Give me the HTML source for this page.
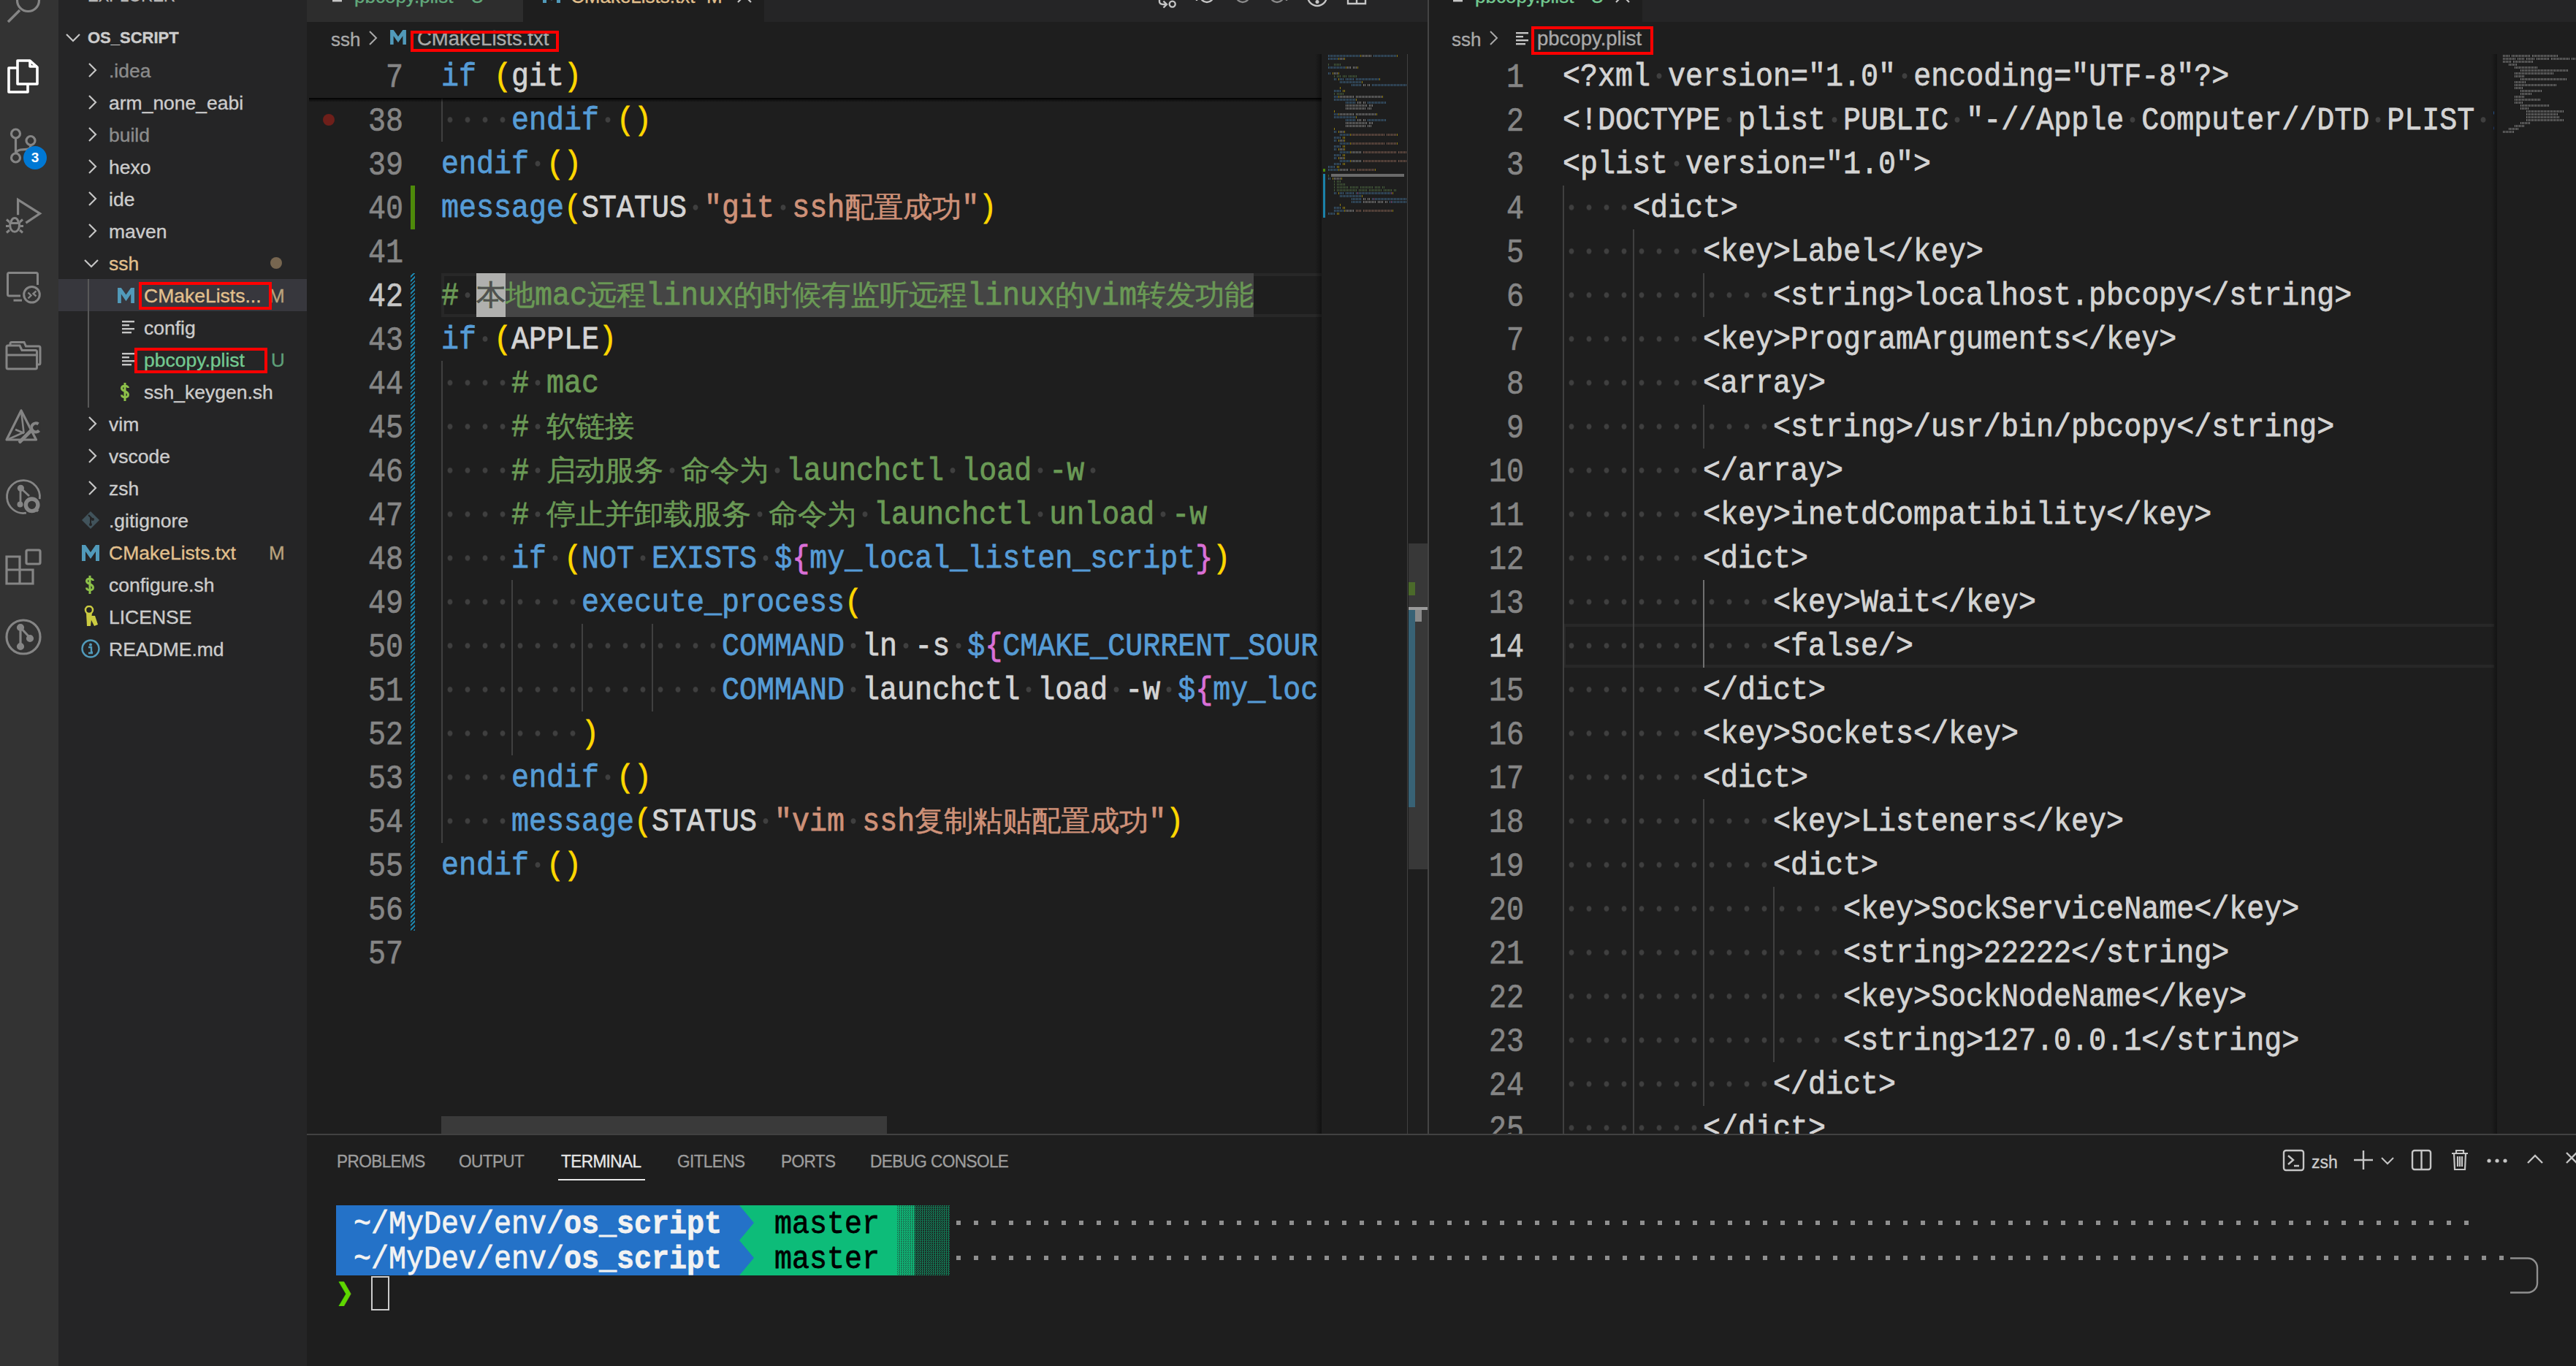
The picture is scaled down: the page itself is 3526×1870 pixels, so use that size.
<!DOCTYPE html><html><head><meta charset="utf-8"><style>
*{margin:0;padding:0;box-sizing:border-box}
html,body{width:3526px;height:1870px;overflow:hidden;background:#1e1e1e}
body{position:relative;font-family:"Liberation Sans",sans-serif}
.a{position:absolute}
.mono{font-family:"Liberation Mono",monospace;font-size:40px;white-space:pre;line-height:60px;transform:scaleY(1.10);transform-origin:0 6px;-webkit-text-stroke:0.7px currentColor}
.term{transform:scaleY(1.12);transform-origin:0 0}
.ws{display:inline-block;vertical-align:top;height:60px;background:radial-gradient(circle at 12px 27.8px,#3f3f3f 0,#3f3f3f 2.9px,rgba(0,0,0,0) 3.9px) 0 0/24px 60px repeat-x}
.cjk{display:inline-block;vertical-align:top;height:60px;transform:scaleY(0.88);transform-origin:50% 37.3px;-webkit-text-stroke:0.5px currentColor}
.ui{font-family:"Liberation Sans",sans-serif;font-size:26px;white-space:pre;-webkit-text-stroke:0.35px currentColor}
.ln{font-family:"Liberation Mono",monospace;font-size:40px;line-height:60px;color:#858585;text-align:right;width:132px;transform:scaleY(1.15);transform-origin:0 6px;-webkit-text-stroke:0.6px currentColor}
.guide{position:absolute;width:2px;background:#404040}
</style></head><body>
<div class="a" style="left:0;top:0;width:80px;height:1870px;background:#333333"></div>
<svg class="a" style="left:0;top:0" width="80" height="920" viewBox="0 0 80 920" fill="none" stroke="#858585" stroke-width="3.2">
<!-- search -->
<circle cx="38.5" cy="0.5" r="15"/><line x1="27" y1="14" x2="11" y2="30" stroke-width="3.6"/>
<!-- explorer -->
<g stroke="#ffffff" stroke-width="3.6" stroke-linejoin="round">
<path d="M24 83 H41 L51 92 V115 H24 Z"/><path d="M41 83 V91 H51"/>
<path d="M24 93 H12 V126 H38 V115"/>
</g>
<!-- scm -->
<circle cx="21.5" cy="183" r="6"/><circle cx="42" cy="192.5" r="6"/><circle cx="21.5" cy="216" r="6"/>
<path d="M21.5 189 V210 M42 198.5 C42 206 36 204 28 205 C24 206 22 208 22 210"/>
<!-- debug -->
<path d="M24.6 294.3 V273.5 L54.6 292.3 L35.4 305.1" stroke-width="3.2"/>
<path d="M13.8 305.5 V309 A6.3 8.3 0 0 0 26.4 309 V305.5 Z" stroke-width="3"/>
<path d="M15.2 304.5 A4.9 6 0 0 1 25 304.5" stroke-width="3"/>
<path d="M9 300.5 L13 304 M31 300.5 L27 304 M8 309.5 H12.5 M27.5 309.5 H32 M9 318.5 L13 315 M31 318.5 L27 315" stroke-width="3"/>
<!-- remote -->
<path d="M28 405 H12.5 A2 2 0 0 1 10.5 403 V375.5 A2 2 0 0 1 12.5 373.5 H49.5 A2 2 0 0 1 51.5 375.5 V390" stroke-width="3"/><path d="M18.5 411.2 H30" stroke-width="3"/>
<circle cx="43.5" cy="403.3" r="10.8" stroke-width="3"/><path d="M38.5 400.5 L42.5 404.5 L38.5 408.5 M49.5 398.5 L45.5 402 L49.5 405.5" stroke-width="2.4"/>
<!-- folder -->
<path d="M11 473 H27 L30 479.5 H48.5 A2 2 0 0 1 50.5 481.5 V503 A2 2 0 0 1 48.5 505 H11 A2 2 0 0 1 9 503 V475 A2 2 0 0 1 11 473 Z" stroke-width="3"/><path d="M9 486 H50.5" stroke-width="3"/>
<path d="M14 472 V470.5 A2 2 0 0 1 16 468.5 H33 L35.5 474 H53 A2 2 0 0 1 55 476 V497 A2 2 0 0 1 53 499 H51" stroke-width="3"/>
<!-- cmake/triangle wrench -->
<path d="M29 562 L9 602 H49.5 Z" stroke-width="3.2" stroke-linejoin="round"/>
<path d="M29 562 L32.5 592 L12 601 M21 588 L33 593" stroke-width="2.6"/>
<circle cx="48.5" cy="585" r="7.5" fill="#333333" stroke="none"/>
<path d="M27.5 604.5 L42.5 589.5" stroke-width="5" stroke-linecap="round"/>
<path d="M52.5 580.5 A6 6 0 1 0 53.5 589.5" stroke-width="4.2"/>
<!-- gitlens -->
<path d="M54.3 683.1 A22.5 22.5 0 1 0 35.9 702.2" stroke-width="2.8"/>
<circle cx="28.4" cy="668.3" r="4.6" fill="#858585" stroke="none"/><circle cx="27.5" cy="690.5" r="4" fill="#858585" stroke="none"/>
<path d="M28 668 V690 M28.4 668.3 L40 679" stroke-width="2.8"/>
<circle cx="43.6" cy="691.3" r="11.5" fill="#333333" stroke="none"/>
<circle cx="43.6" cy="691.3" r="8.3" stroke-width="5.4"/><path d="M49 697 L52 700" stroke-width="3.5"/>
<!-- extensions -->
<path d="M9 762 H27 V780 H45 V799 H9 Z M27 780 V799 M9 780 H27"/><rect x="36" y="753" width="19" height="19" rx="2"/>
<!-- git graph -->
<circle cx="32" cy="872" r="23"/><circle cx="28" cy="859" r="3.5" fill="#858585"/><circle cx="41" cy="874" r="3.5" fill="#858585"/><circle cx="28" cy="885" r="3.5" fill="#858585"/><path d="M28 862 V882 M28 859 L40 872"/>
</svg>
<div class="a" style="left:32px;top:200px;width:32px;height:32px;border-radius:16px;background:#0078d4;color:#fff;font:bold 19px/32px 'Liberation Sans',sans-serif;text-align:center">3</div>
<div class="a" style="left:80px;top:0;width:340px;height:1870px;background:#252526"></div>
<div class="a ui" style="left:120px;top:-18px;font-size:22px;color:#bbbbbb;line-height:26px">EXPLORER</div>
<svg class="a" style="left:88px;top:44px" width="24" height="16"><path d="M3 3 L12 12 L21 3" stroke="#c5c5c5" stroke-width="2.2" fill="none"/></svg>
<div class="a ui" style="left:120px;top:30px;line-height:44px;font-size:22px;font-weight:bold;color:#cccccc">OS_SCRIPT</div>
<svg class="a" style="left:120px;top:85px" width="14" height="22"><path d="M2 2 L11 11 L2 20" stroke="#c5c5c5" stroke-width="2.2" fill="none"/></svg>
<div class="a ui" style="left:149px;top:75px;line-height:44px;font-size:26.5px;color:#8c8c8c">.idea</div>
<svg class="a" style="left:120px;top:129px" width="14" height="22"><path d="M2 2 L11 11 L2 20" stroke="#c5c5c5" stroke-width="2.2" fill="none"/></svg>
<div class="a ui" style="left:149px;top:119px;line-height:44px;font-size:26.5px;color:#cccccc">arm_none_eabi</div>
<svg class="a" style="left:120px;top:173px" width="14" height="22"><path d="M2 2 L11 11 L2 20" stroke="#c5c5c5" stroke-width="2.2" fill="none"/></svg>
<div class="a ui" style="left:149px;top:163px;line-height:44px;font-size:26.5px;color:#8c8c8c">build</div>
<svg class="a" style="left:120px;top:217px" width="14" height="22"><path d="M2 2 L11 11 L2 20" stroke="#c5c5c5" stroke-width="2.2" fill="none"/></svg>
<div class="a ui" style="left:149px;top:207px;line-height:44px;font-size:26.5px;color:#cccccc">hexo</div>
<svg class="a" style="left:120px;top:261px" width="14" height="22"><path d="M2 2 L11 11 L2 20" stroke="#c5c5c5" stroke-width="2.2" fill="none"/></svg>
<div class="a ui" style="left:149px;top:251px;line-height:44px;font-size:26.5px;color:#cccccc">ide</div>
<svg class="a" style="left:120px;top:305px" width="14" height="22"><path d="M2 2 L11 11 L2 20" stroke="#c5c5c5" stroke-width="2.2" fill="none"/></svg>
<div class="a ui" style="left:149px;top:295px;line-height:44px;font-size:26.5px;color:#cccccc">maven</div>
<svg class="a" style="left:114px;top:354px" width="24" height="14"><path d="M2 2 L11 11 L20 2" stroke="#c5c5c5" stroke-width="2.2" fill="none"/></svg>
<div class="a ui" style="left:149px;top:339px;line-height:44px;font-size:26.5px;color:#e2c08d">ssh</div>
<div class="a" style="left:80px;top:382px;width:340px;height:44px;background:#37373d"></div>
<svg class="a" style="left:161px;top:394px" width="23" height="21" viewBox="0 0 24 22"><path d="M0 22 V0 H5 L12 10 L19 0 H24 V22 H19 V9 L12 19 L5 9 V22 Z" fill="#519aba"/></svg>
<div class="a ui" style="left:197px;top:383px;line-height:44px;font-size:26.5px;color:#e2c08d">CMakeLists...</div>
<svg class="a" style="left:167px;top:438px" width="18" height="20"><g fill="#c5c5c5"><rect x="0" y="1" width="17" height="2.4"/><rect x="0" y="6" width="10" height="2.4"/><rect x="0" y="11" width="17" height="2.4"/><rect x="0" y="16" width="13" height="2.4"/></g></svg>
<div class="a ui" style="left:197px;top:427px;line-height:44px;font-size:26.5px;color:#cccccc">config</div>
<svg class="a" style="left:167px;top:482px" width="18" height="20"><g fill="#c5c5c5"><rect x="0" y="1" width="17" height="2.4"/><rect x="0" y="6" width="10" height="2.4"/><rect x="0" y="11" width="17" height="2.4"/><rect x="0" y="16" width="13" height="2.4"/></g></svg>
<div class="a ui" style="left:197px;top:471px;line-height:44px;font-size:26.5px;color:#73c991">pbcopy.plist</div>
<svg class="a" style="left:164px;top:524px" width="14" height="26"><path d="M7 0 V25 M11.5 7 C11.5 3.5 2.5 3.2 2.5 7.5 C2.5 12 11.5 11 11.5 16.5 C11.5 21 2.5 21 2.5 16.5" stroke="#8dc149" stroke-width="3" fill="none"/></svg>
<div class="a ui" style="left:197px;top:515px;line-height:44px;font-size:26.5px;color:#cccccc">ssh_keygen.sh</div>
<svg class="a" style="left:120px;top:569px" width="14" height="22"><path d="M2 2 L11 11 L2 20" stroke="#c5c5c5" stroke-width="2.2" fill="none"/></svg>
<div class="a ui" style="left:149px;top:559px;line-height:44px;font-size:26.5px;color:#cccccc">vim</div>
<svg class="a" style="left:120px;top:613px" width="14" height="22"><path d="M2 2 L11 11 L2 20" stroke="#c5c5c5" stroke-width="2.2" fill="none"/></svg>
<div class="a ui" style="left:149px;top:603px;line-height:44px;font-size:26.5px;color:#cccccc">vscode</div>
<svg class="a" style="left:120px;top:657px" width="14" height="22"><path d="M2 2 L11 11 L2 20" stroke="#c5c5c5" stroke-width="2.2" fill="none"/></svg>
<div class="a ui" style="left:149px;top:647px;line-height:44px;font-size:26.5px;color:#cccccc">zsh</div>
<svg class="a" style="left:110px;top:698px" width="28" height="28"><path d="M14 2 L26 14 L14 26 L2 14 Z" fill="#41535b"/><path d="M11 7 L17 13 M14 10 V20" stroke="#252526" stroke-width="2"/><circle cx="14" cy="20" r="2" fill="#252526"/><circle cx="17" cy="13" r="2" fill="#252526"/></svg>
<div class="a ui" style="left:149px;top:691px;line-height:44px;font-size:26.5px;color:#cccccc">.gitignore</div>
<svg class="a" style="left:112px;top:746px" width="24" height="22" viewBox="0 0 24 22"><path d="M0 22 V0 H5 L12 10 L19 0 H24 V22 H19 V9 L12 19 L5 9 V22 Z" fill="#519aba"/></svg>
<div class="a ui" style="left:149px;top:735px;line-height:44px;font-size:26.5px;color:#e2c08d">CMakeLists.txt</div>
<svg class="a" style="left:116px;top:788px" width="14" height="26"><path d="M7 0 V25 M11.5 7 C11.5 3.5 2.5 3.2 2.5 7.5 C2.5 12 11.5 11 11.5 16.5 C11.5 21 2.5 21 2.5 16.5" stroke="#8dc149" stroke-width="3" fill="none"/></svg>
<div class="a ui" style="left:149px;top:779px;line-height:44px;font-size:26.5px;color:#cccccc">configure.sh</div>
<svg class="a" style="left:110px;top:829px" width="28" height="30"><g fill="#cbcb41"><circle cx="12" cy="6" r="5" fill="none" stroke="#cbcb41" stroke-width="2.5"/><path d="M8 10 H16 L14 28 H9 Z"/><path d="M14 14 H20 L24 26 L19 28 L14 18 Z"/></g></svg>
<div class="a ui" style="left:149px;top:823px;line-height:44px;font-size:26.5px;color:#cccccc">LICENSE</div>
<svg class="a" style="left:110px;top:874px" width="28" height="28"><circle cx="14" cy="14" r="11.5" fill="none" stroke="#519aba" stroke-width="2.4"/><circle cx="14" cy="8.5" r="2" fill="#519aba"/><path d="M11 12 H15 V19 H17 M11 20 H17" stroke="#519aba" stroke-width="2.4" fill="none"/></svg>
<div class="a ui" style="left:149px;top:867px;line-height:44px;font-size:26.5px;color:#cccccc">README.md</div>
<div class="a" style="left:120px;top:382px;width:2px;height:176px;background:#585858"></div>
<div class="a" style="left:370px;top:352px;width:16px;height:16px;border-radius:8px;background:#776650"></div>
<div class="a ui" style="left:368px;top:383px;line-height:44px;color:#b9a27c">M</div>
<div class="a ui" style="left:371px;top:471px;line-height:44px;color:#5e9f78">U</div>
<div class="a ui" style="left:368px;top:735px;line-height:44px;color:#b9a27c">M</div>
<div class="a" style="left:190px;top:386px;width:182px;height:38px;border:4px solid #ff0000"></div>
<div class="a" style="left:184px;top:476px;width:182px;height:35px;border:4px solid #ff0000"></div>
<div class="a" style="left:420px;top:0;width:1534px;height:30px;background:#252526"></div>
<div class="a" style="left:420px;top:0;width:296px;height:30px;background:#2d2d2d"></div>
<svg class="a" style="left:455px;top:-16px" width="18" height="20"><g fill="#c5c5c5"><rect x="0" y="1" width="17" height="2.4"/><rect x="0" y="6" width="10" height="2.4"/><rect x="0" y="11" width="17" height="2.4"/><rect x="0" y="16" width="13" height="2.4"/></g></svg>
<div class="a ui" style="left:485px;top:-27px;line-height:44px;color:#62a97c">pbcopy.plist</div>
<div class="a ui" style="left:644px;top:-27px;line-height:44px;color:#62a97c">U</div>
<div class="a" style="left:716px;top:0;width:330px;height:30px;background:#1e1e1e"></div>
<svg class="a" style="left:743px;top:-18px" width="24" height="22" viewBox="0 0 24 22"><path d="M0 22 V0 H5 L12 10 L19 0 H24 V22 H19 V9 L12 19 L5 9 V22 Z" fill="#519aba"/></svg>
<div class="a ui" style="left:781px;top:-27px;line-height:44px;color:#e2c08d">CMakeLists.txt</div>
<div class="a ui" style="left:967px;top:-27px;line-height:44px;color:#e2c08d">M</div>
<svg class="a" style="left:1008px;top:-17px" width="22" height="22"><path d="M2 2 L20 20 M20 2 L2 20" stroke="#c5c5c5" stroke-width="2.2"/></svg>
<svg class="a" style="left:1580px;top:0" width="300" height="14" fill="none" stroke="#c5c5c5" stroke-width="2.4">
<path d="M7 -4 V2 C7 5 9 6 12 6 H17 M12.5 1.5 L17 6 L12.5 10.5"/><circle cx="24.7" cy="5.6" r="4"/>
<circle cx="72" cy="-6" r="9"/><path d="M58 -1 V1"/>
<circle cx="121" cy="-6" r="9" stroke="#8a8a8a"/>
<circle cx="168" cy="-6" r="9" stroke="#8a8a8a"/><path d="M181 -1 V1" stroke="#8a8a8a"/>
<circle cx="223" cy="-5" r="13"/><circle cx="223" cy="2.5" r="2.5" fill="#c5c5c5" stroke="none"/>
<path d="M265 -10 V5 H289 V-10 M277 -10 V5"/>
</svg>
<div class="a ui" style="left:453px;top:32px;line-height:44px;color:#a9a9a9">ssh</div>
<svg class="a" style="left:503px;top:41px" width="16" height="22"><path d="M3 2 L12 11 L3 20" stroke="#a9a9a9" stroke-width="2" fill="none"/></svg>
<svg class="a" style="left:534px;top:41px" width="22" height="20" viewBox="0 0 24 22"><path d="M0 22 V0 H5 L12 10 L19 0 H24 V22 H19 V9 L12 19 L5 9 V22 Z" fill="#519aba"/></svg>
<div class="a ui" style="left:571px;top:31px;line-height:44px;color:#a9a9a9;font-size:27.5px">CMakeLists.txt</div>
<div class="a" style="left:562px;top:42px;width:203px;height:29px;border:4px solid #ff0000"></div>
<div class="a" style="left:420px;top:74px;width:1386px;height:1478px;overflow:hidden">
<div class="a" style="left:184px;top:300px;width:1212px;height:60px;border:4px solid #282828"></div>
<div class="a" style="left:272px;top:300px;width:1024px;height:60px;background:#454545"></div>
<div class="a" style="left:232px;top:300px;width:40px;height:60px;background:#b0b0ae"></div>
<div class="guide" style="left:184px;top:60px;height:60px"></div>
<div class="guide" style="left:184px;top:420px;height:60px"></div>
<div class="guide" style="left:184px;top:480px;height:60px"></div>
<div class="guide" style="left:184px;top:540px;height:60px"></div>
<div class="guide" style="left:184px;top:600px;height:60px"></div>
<div class="guide" style="left:184px;top:660px;height:60px"></div>
<div class="guide" style="left:184px;top:720px;height:60px"></div>
<div class="guide" style="left:280px;top:720px;height:60px"></div>
<div class="guide" style="left:184px;top:780px;height:60px"></div>
<div class="guide" style="left:280px;top:780px;height:60px"></div>
<div class="guide" style="left:376px;top:780px;height:60px"></div>
<div class="guide" style="left:472px;top:780px;height:60px"></div>
<div class="guide" style="left:184px;top:840px;height:60px"></div>
<div class="guide" style="left:280px;top:840px;height:60px"></div>
<div class="guide" style="left:376px;top:840px;height:60px"></div>
<div class="guide" style="left:472px;top:840px;height:60px"></div>
<div class="guide" style="left:184px;top:900px;height:60px"></div>
<div class="guide" style="left:280px;top:900px;height:60px"></div>
<div class="guide" style="left:184px;top:960px;height:60px"></div>
<div class="guide" style="left:184px;top:1020px;height:60px"></div>
<div class="a mono" style="left:184px;top:60px"><span class="ws">    </span><span style="color:#569cd6">endif</span><span class="ws"> </span><span style="color:#ffd700">()</span></div>
<div class="a mono" style="left:184px;top:120px"><span style="color:#569cd6">endif</span><span class="ws"> </span><span style="color:#ffd700">()</span></div>
<div class="a mono" style="left:184px;top:180px"><span style="color:#569cd6">message</span><span style="color:#ffd700">(</span><span style="color:#d4d4d4">STATUS</span><span class="ws"> </span><span style="color:#ce9178">&quot;git</span><span class="ws"> </span><span style="color:#ce9178">ssh<span class="cjk">配置成功</span>&quot;</span><span style="color:#ffd700">)</span></div>
<div class="a mono" style="left:184px;top:240px"></div>
<div class="a mono" style="left:184px;top:300px"><span style="color:#6a9955">#</span><span class="ws"> </span><span style="color:#6a9955"><span class="cjk">本地</span>mac<span class="cjk">远程</span>linux<span class="cjk">的时候有监听远程</span>linux<span class="cjk">的</span>vim<span class="cjk">转发功能</span></span></div>
<div class="a mono" style="left:184px;top:360px"><span style="color:#569cd6">if</span><span class="ws"> </span><span style="color:#ffd700">(</span><span style="color:#d4d4d4">APPLE</span><span style="color:#ffd700">)</span></div>
<div class="a mono" style="left:184px;top:420px"><span class="ws">    </span><span style="color:#6a9955">#</span><span class="ws"> </span><span style="color:#6a9955">mac</span></div>
<div class="a mono" style="left:184px;top:480px"><span class="ws">    </span><span style="color:#6a9955">#</span><span class="ws"> </span><span style="color:#6a9955"><span class="cjk">软链接</span></span></div>
<div class="a mono" style="left:184px;top:540px"><span class="ws">    </span><span style="color:#6a9955">#</span><span class="ws"> </span><span style="color:#6a9955"><span class="cjk">启动服务</span></span><span class="ws"> </span><span style="color:#6a9955"><span class="cjk">命令为</span></span><span class="ws"> </span><span style="color:#6a9955">launchctl</span><span class="ws"> </span><span style="color:#6a9955">load</span><span class="ws"> </span><span style="color:#6a9955">-w</span><span class="ws"> </span></div>
<div class="a mono" style="left:184px;top:600px"><span class="ws">    </span><span style="color:#6a9955">#</span><span class="ws"> </span><span style="color:#6a9955"><span class="cjk">停止并卸载服务</span></span><span class="ws"> </span><span style="color:#6a9955"><span class="cjk">命令为</span></span><span class="ws"> </span><span style="color:#6a9955">launchctl</span><span class="ws"> </span><span style="color:#6a9955">unload</span><span class="ws"> </span><span style="color:#6a9955">-w</span></div>
<div class="a mono" style="left:184px;top:660px"><span class="ws">    </span><span style="color:#569cd6">if</span><span class="ws"> </span><span style="color:#ffd700">(</span><span style="color:#569cd6">NOT</span><span class="ws"> </span><span style="color:#569cd6">EXISTS</span><span class="ws"> </span><span style="color:#569cd6">$</span><span style="color:#da70d6">{</span><span style="color:#569cd6">my_local_listen_script</span><span style="color:#da70d6">}</span><span style="color:#ffd700">)</span></div>
<div class="a mono" style="left:184px;top:720px"><span class="ws">        </span><span style="color:#569cd6">execute_process</span><span style="color:#ffd700">(</span></div>
<div class="a mono" style="left:184px;top:780px"><span class="ws">                </span><span style="color:#569cd6">COMMAND</span><span class="ws"> </span><span style="color:#d4d4d4">ln</span><span class="ws"> </span><span style="color:#d4d4d4">-s</span><span class="ws"> </span><span style="color:#569cd6">$</span><span style="color:#da70d6">{</span><span style="color:#569cd6">CMAKE_CURRENT_SOURCE_DIR</span><span style="color:#da70d6">}</span></div>
<div class="a mono" style="left:184px;top:840px"><span class="ws">                </span><span style="color:#569cd6">COMMAND</span><span class="ws"> </span><span style="color:#d4d4d4">launchctl</span><span class="ws"> </span><span style="color:#d4d4d4">load</span><span class="ws"> </span><span style="color:#d4d4d4">-w</span><span class="ws"> </span><span style="color:#569cd6">$</span><span style="color:#da70d6">{</span><span style="color:#569cd6">my_local_listen_script</span><span style="color:#da70d6">}</span></div>
<div class="a mono" style="left:184px;top:900px"><span class="ws">        </span><span style="color:#ffd700">)</span></div>
<div class="a mono" style="left:184px;top:960px"><span class="ws">    </span><span style="color:#569cd6">endif</span><span class="ws"> </span><span style="color:#ffd700">()</span></div>
<div class="a mono" style="left:184px;top:1020px"><span class="ws">    </span><span style="color:#569cd6">message</span><span style="color:#ffd700">(</span><span style="color:#d4d4d4">STATUS</span><span class="ws"> </span><span style="color:#ce9178">&quot;vim</span><span class="ws"> </span><span style="color:#ce9178">ssh<span class="cjk">复制粘贴配置成功</span>&quot;</span><span style="color:#ffd700">)</span></div>
<div class="a mono" style="left:184px;top:1080px"><span style="color:#569cd6">endif</span><span class="ws"> </span><span style="color:#ffd700">()</span></div>
<div class="a mono" style="left:184px;top:1140px"></div>
<div class="a mono" style="left:184px;top:1200px"></div>
<div class="a mono" style="left:232px;top:300px;color:#505050"><span class="cjk">本</span></div>
<div class="a ln" style="left:0;top:60px;width:132px;color:#858585">38</div>
<div class="a ln" style="left:0;top:120px;width:132px;color:#858585">39</div>
<div class="a ln" style="left:0;top:180px;width:132px;color:#858585">40</div>
<div class="a ln" style="left:0;top:240px;width:132px;color:#858585">41</div>
<div class="a ln" style="left:0;top:300px;width:132px;color:#c6c6c6">42</div>
<div class="a ln" style="left:0;top:360px;width:132px;color:#858585">43</div>
<div class="a ln" style="left:0;top:420px;width:132px;color:#858585">44</div>
<div class="a ln" style="left:0;top:480px;width:132px;color:#858585">45</div>
<div class="a ln" style="left:0;top:540px;width:132px;color:#858585">46</div>
<div class="a ln" style="left:0;top:600px;width:132px;color:#858585">47</div>
<div class="a ln" style="left:0;top:660px;width:132px;color:#858585">48</div>
<div class="a ln" style="left:0;top:720px;width:132px;color:#858585">49</div>
<div class="a ln" style="left:0;top:780px;width:132px;color:#858585">50</div>
<div class="a ln" style="left:0;top:840px;width:132px;color:#858585">51</div>
<div class="a ln" style="left:0;top:900px;width:132px;color:#858585">52</div>
<div class="a ln" style="left:0;top:960px;width:132px;color:#858585">53</div>
<div class="a ln" style="left:0;top:1020px;width:132px;color:#858585">54</div>
<div class="a ln" style="left:0;top:1080px;width:132px;color:#858585">55</div>
<div class="a ln" style="left:0;top:1140px;width:132px;color:#858585">56</div>
<div class="a ln" style="left:0;top:1200px;width:132px;color:#858585">57</div>
<div class="a" style="left:22px;top:82px;width:16px;height:16px;border-radius:8px;background:#6e1f1a"></div>
<div class="a" style="left:142px;top:180px;width:6px;height:60px;background:#4e8a0a"></div>
<div class="a" style="left:142px;top:300px;width:6px;height:900px;background:repeating-linear-gradient(-45deg,#1b81a8 0,#1b81a8 2px,#1e1e1e 2px,#1e1e1e 4px)"></div>
<div class="a" style="left:0;top:0;width:1389px;height:60px;background:#1e1e1e"></div>
<div class="a" style="left:3px;top:60px;width:1389px;height:6px;background:linear-gradient(#000 0,rgba(0,0,0,0.6) 2px,rgba(0,0,0,0) 6px)"></div>
<div class="a ln" style="left:0;top:0">7</div>
<div class="a mono" style="left:184px;top:0"><span style="color:#569cd6">if</span> <span style="color:#ffd700">(</span><span style="color:#d4d4d4">git</span><span style="color:#ffd700">)</span></div>
</div>
<div class="a" style="left:1806px;top:134px;width:3px;height:6px;background:linear-gradient(#000 0,rgba(0,0,0,0.6) 2px,rgba(0,0,0,0) 6px)"></div>
<div class="a" style="left:1806px;top:374px;width:3px;height:4px;background:#282828"></div>
<div class="a" style="left:1806px;top:430px;width:3px;height:4px;background:#282828"></div>
<div class="a" style="left:604px;top:1528px;width:610px;height:24px;background:#3a3a3a"></div>
<div class="a" style="left:1800px;top:74px;width:9px;height:1478px;background:linear-gradient(90deg,rgba(0,0,0,0),rgba(0,0,0,0.4))"></div>
<div class="a" style="left:1809px;top:74px;width:117px;height:1478px;background:#1e1e1e"></div>
<div class="a" style="left:1818px;top:75px;width:108px;height:238px;overflow:hidden"><div class="a" style="left:0px;top:0px;width:44px;height:3px;background:repeating-linear-gradient(90deg,#569cd6 0,#569cd6 1.5px,rgba(0,0,0,0) 1.5px,rgba(0,0,0,0) 2px);opacity:0.50"></div><div class="a" style="left:44px;top:0px;width:2px;height:3px;background:repeating-linear-gradient(90deg,#ffd700 0,#ffd700 1.5px,rgba(0,0,0,0) 1.5px,rgba(0,0,0,0) 2px);opacity:0.50"></div><div class="a" style="left:46px;top:0px;width:14px;height:3px;background:repeating-linear-gradient(90deg,#d4d4d4 0,#d4d4d4 1.5px,rgba(0,0,0,0) 1.5px,rgba(0,0,0,0) 2px);opacity:0.50"></div><div class="a" style="left:62px;top:0px;width:32px;height:3px;background:repeating-linear-gradient(90deg,#569cd6 0,#569cd6 1.5px,rgba(0,0,0,0) 1.5px,rgba(0,0,0,0) 2px);opacity:0.50"></div><div class="a" style="left:94px;top:0px;width:2px;height:3px;background:repeating-linear-gradient(90deg,#ffd700 0,#ffd700 1.5px,rgba(0,0,0,0) 1.5px,rgba(0,0,0,0) 2px);opacity:0.50"></div><div class="a" style="left:0px;top:4px;width:14px;height:3px;background:repeating-linear-gradient(90deg,#569cd6 0,#569cd6 1.5px,rgba(0,0,0,0) 1.5px,rgba(0,0,0,0) 2px);opacity:0.50"></div><div class="a" style="left:14px;top:4px;width:2px;height:3px;background:repeating-linear-gradient(90deg,#ffd700 0,#ffd700 1.5px,rgba(0,0,0,0) 1.5px,rgba(0,0,0,0) 2px);opacity:0.50"></div><div class="a" style="left:16px;top:4px;width:6px;height:3px;background:repeating-linear-gradient(90deg,#d4d4d4 0,#d4d4d4 1.5px,rgba(0,0,0,0) 1.5px,rgba(0,0,0,0) 2px);opacity:0.50"></div><div class="a" style="left:22px;top:4px;width:2px;height:3px;background:repeating-linear-gradient(90deg,#ffd700 0,#ffd700 1.5px,rgba(0,0,0,0) 1.5px,rgba(0,0,0,0) 2px);opacity:0.50"></div><div class="a" style="left:0px;top:12px;width:2px;height:3px;background:repeating-linear-gradient(90deg,#6a9955 0,#6a9955 1.5px,rgba(0,0,0,0) 1.5px,rgba(0,0,0,0) 2px);opacity:0.50"></div><div class="a" style="left:8px;top:12px;width:10px;height:3px;background:repeating-linear-gradient(90deg,#6a9955 0,#6a9955 1.5px,rgba(0,0,0,0) 1.5px,rgba(0,0,0,0) 2px);opacity:0.50"></div><div class="a" style="left:0px;top:16px;width:24px;height:3px;background:repeating-linear-gradient(90deg,#569cd6 0,#569cd6 1.5px,rgba(0,0,0,0) 1.5px,rgba(0,0,0,0) 2px);opacity:0.50"></div><div class="a" style="left:24px;top:16px;width:2px;height:3px;background:repeating-linear-gradient(90deg,#ffd700 0,#ffd700 1.5px,rgba(0,0,0,0) 1.5px,rgba(0,0,0,0) 2px);opacity:0.50"></div><div class="a" style="left:26px;top:16px;width:6px;height:3px;background:repeating-linear-gradient(90deg,#d4d4d4 0,#d4d4d4 1.5px,rgba(0,0,0,0) 1.5px,rgba(0,0,0,0) 2px);opacity:0.50"></div><div class="a" style="left:34px;top:16px;width:6px;height:3px;background:repeating-linear-gradient(90deg,#d4d4d4 0,#d4d4d4 1.5px,rgba(0,0,0,0) 1.5px,rgba(0,0,0,0) 2px);opacity:0.50"></div><div class="a" style="left:40px;top:16px;width:2px;height:3px;background:repeating-linear-gradient(90deg,#ffd700 0,#ffd700 1.5px,rgba(0,0,0,0) 1.5px,rgba(0,0,0,0) 2px);opacity:0.50"></div><div class="a" style="left:0px;top:24px;width:4px;height:3px;background:repeating-linear-gradient(90deg,#569cd6 0,#569cd6 1.5px,rgba(0,0,0,0) 1.5px,rgba(0,0,0,0) 2px);opacity:0.50"></div><div class="a" style="left:6px;top:24px;width:2px;height:3px;background:repeating-linear-gradient(90deg,#ffd700 0,#ffd700 1.5px,rgba(0,0,0,0) 1.5px,rgba(0,0,0,0) 2px);opacity:0.50"></div><div class="a" style="left:8px;top:24px;width:6px;height:3px;background:repeating-linear-gradient(90deg,#d4d4d4 0,#d4d4d4 1.5px,rgba(0,0,0,0) 1.5px,rgba(0,0,0,0) 2px);opacity:0.50"></div><div class="a" style="left:14px;top:24px;width:2px;height:3px;background:repeating-linear-gradient(90deg,#ffd700 0,#ffd700 1.5px,rgba(0,0,0,0) 1.5px,rgba(0,0,0,0) 2px);opacity:0.50"></div><div class="a" style="left:8px;top:28px;width:2px;height:3px;background:repeating-linear-gradient(90deg,#6a9955 0,#6a9955 1.5px,rgba(0,0,0,0) 1.5px,rgba(0,0,0,0) 2px);opacity:0.50"></div><div class="a" style="left:12px;top:28px;width:6px;height:3px;background:repeating-linear-gradient(90deg,#6a9955 0,#6a9955 1.5px,rgba(0,0,0,0) 1.5px,rgba(0,0,0,0) 2px);opacity:0.50"></div><div class="a" style="left:20px;top:28px;width:6px;height:3px;background:repeating-linear-gradient(90deg,#6a9955 0,#6a9955 1.5px,rgba(0,0,0,0) 1.5px,rgba(0,0,0,0) 2px);opacity:0.50"></div><div class="a" style="left:28px;top:28px;width:12px;height:3px;background:repeating-linear-gradient(90deg,#6a9955 0,#6a9955 1.5px,rgba(0,0,0,0) 1.5px,rgba(0,0,0,0) 2px);opacity:0.50"></div><div class="a" style="left:8px;top:32px;width:4px;height:3px;background:repeating-linear-gradient(90deg,#569cd6 0,#569cd6 1.5px,rgba(0,0,0,0) 1.5px,rgba(0,0,0,0) 2px);opacity:0.50"></div><div class="a" style="left:14px;top:32px;width:2px;height:3px;background:repeating-linear-gradient(90deg,#ffd700 0,#ffd700 1.5px,rgba(0,0,0,0) 1.5px,rgba(0,0,0,0) 2px);opacity:0.50"></div><div class="a" style="left:16px;top:32px;width:6px;height:3px;background:repeating-linear-gradient(90deg,#569cd6 0,#569cd6 1.5px,rgba(0,0,0,0) 1.5px,rgba(0,0,0,0) 2px);opacity:0.50"></div><div class="a" style="left:24px;top:32px;width:12px;height:3px;background:repeating-linear-gradient(90deg,#569cd6 0,#569cd6 1.5px,rgba(0,0,0,0) 1.5px,rgba(0,0,0,0) 2px);opacity:0.50"></div><div class="a" style="left:38px;top:32px;width:32px;height:3px;background:repeating-linear-gradient(90deg,#569cd6 0,#569cd6 1.5px,rgba(0,0,0,0) 1.5px,rgba(0,0,0,0) 2px);opacity:0.50"></div><div class="a" style="left:70px;top:32px;width:2px;height:3px;background:repeating-linear-gradient(90deg,#ffd700 0,#ffd700 1.5px,rgba(0,0,0,0) 1.5px,rgba(0,0,0,0) 2px);opacity:0.50"></div><div class="a" style="left:16px;top:36px;width:30px;height:3px;background:repeating-linear-gradient(90deg,#569cd6 0,#569cd6 1.5px,rgba(0,0,0,0) 1.5px,rgba(0,0,0,0) 2px);opacity:0.50"></div><div class="a" style="left:46px;top:36px;width:2px;height:3px;background:repeating-linear-gradient(90deg,#ffd700 0,#ffd700 1.5px,rgba(0,0,0,0) 1.5px,rgba(0,0,0,0) 2px);opacity:0.50"></div><div class="a" style="left:32px;top:40px;width:14px;height:3px;background:repeating-linear-gradient(90deg,#569cd6 0,#569cd6 1.5px,rgba(0,0,0,0) 1.5px,rgba(0,0,0,0) 2px);opacity:0.50"></div><div class="a" style="left:48px;top:40px;width:4px;height:3px;background:repeating-linear-gradient(90deg,#d4d4d4 0,#d4d4d4 1.5px,rgba(0,0,0,0) 1.5px,rgba(0,0,0,0) 2px);opacity:0.50"></div><div class="a" style="left:54px;top:40px;width:4px;height:3px;background:repeating-linear-gradient(90deg,#d4d4d4 0,#d4d4d4 1.5px,rgba(0,0,0,0) 1.5px,rgba(0,0,0,0) 2px);opacity:0.50"></div><div class="a" style="left:60px;top:40px;width:54px;height:3px;background:repeating-linear-gradient(90deg,#569cd6 0,#569cd6 1.5px,rgba(0,0,0,0) 1.5px,rgba(0,0,0,0) 2px);opacity:0.50"></div><div class="a" style="left:16px;top:44px;width:2px;height:3px;background:repeating-linear-gradient(90deg,#ffd700 0,#ffd700 1.5px,rgba(0,0,0,0) 1.5px,rgba(0,0,0,0) 2px);opacity:0.50"></div><div class="a" style="left:8px;top:48px;width:10px;height:3px;background:repeating-linear-gradient(90deg,#569cd6 0,#569cd6 1.5px,rgba(0,0,0,0) 1.5px,rgba(0,0,0,0) 2px);opacity:0.50"></div><div class="a" style="left:20px;top:48px;width:4px;height:3px;background:repeating-linear-gradient(90deg,#ffd700 0,#ffd700 1.5px,rgba(0,0,0,0) 1.5px,rgba(0,0,0,0) 2px);opacity:0.50"></div><div class="a" style="left:8px;top:52px;width:2px;height:3px;background:repeating-linear-gradient(90deg,#6a9955 0,#6a9955 1.5px,rgba(0,0,0,0) 1.5px,rgba(0,0,0,0) 2px);opacity:0.50"></div><div class="a" style="left:12px;top:52px;width:10px;height:3px;background:repeating-linear-gradient(90deg,#6a9955 0,#6a9955 1.5px,rgba(0,0,0,0) 1.5px,rgba(0,0,0,0) 2px);opacity:0.50"></div><div class="a" style="left:8px;top:56px;width:6px;height:3px;background:repeating-linear-gradient(90deg,#569cd6 0,#569cd6 1.5px,rgba(0,0,0,0) 1.5px,rgba(0,0,0,0) 2px);opacity:0.50"></div><div class="a" style="left:14px;top:56px;width:2px;height:3px;background:repeating-linear-gradient(90deg,#ffd700 0,#ffd700 1.5px,rgba(0,0,0,0) 1.5px,rgba(0,0,0,0) 2px);opacity:0.50"></div><div class="a" style="left:16px;top:56px;width:20px;height:3px;background:repeating-linear-gradient(90deg,#d4d4d4 0,#d4d4d4 1.5px,rgba(0,0,0,0) 1.5px,rgba(0,0,0,0) 2px);opacity:0.50"></div><div class="a" style="left:38px;top:56px;width:36px;height:3px;background:repeating-linear-gradient(90deg,#d4d4d4 0,#d4d4d4 1.5px,rgba(0,0,0,0) 1.5px,rgba(0,0,0,0) 2px);opacity:0.50"></div><div class="a" style="left:74px;top:56px;width:2px;height:3px;background:repeating-linear-gradient(90deg,#ffd700 0,#ffd700 1.5px,rgba(0,0,0,0) 1.5px,rgba(0,0,0,0) 2px);opacity:0.50"></div><div class="a" style="left:8px;top:60px;width:30px;height:3px;background:repeating-linear-gradient(90deg,#569cd6 0,#569cd6 1.5px,rgba(0,0,0,0) 1.5px,rgba(0,0,0,0) 2px);opacity:0.50"></div><div class="a" style="left:38px;top:60px;width:2px;height:3px;background:repeating-linear-gradient(90deg,#ffd700 0,#ffd700 1.5px,rgba(0,0,0,0) 1.5px,rgba(0,0,0,0) 2px);opacity:0.50"></div><div class="a" style="left:24px;top:64px;width:14px;height:3px;background:repeating-linear-gradient(90deg,#569cd6 0,#569cd6 1.5px,rgba(0,0,0,0) 1.5px,rgba(0,0,0,0) 2px);opacity:0.50"></div><div class="a" style="left:40px;top:64px;width:6px;height:3px;background:repeating-linear-gradient(90deg,#d4d4d4 0,#d4d4d4 1.5px,rgba(0,0,0,0) 1.5px,rgba(0,0,0,0) 2px);opacity:0.50"></div><div class="a" style="left:48px;top:64px;width:4px;height:3px;background:repeating-linear-gradient(90deg,#d4d4d4 0,#d4d4d4 1.5px,rgba(0,0,0,0) 1.5px,rgba(0,0,0,0) 2px);opacity:0.50"></div><div class="a" style="left:54px;top:64px;width:26px;height:3px;background:repeating-linear-gradient(90deg,#569cd6 0,#569cd6 1.5px,rgba(0,0,0,0) 1.5px,rgba(0,0,0,0) 2px);opacity:0.50"></div><div class="a" style="left:24px;top:68px;width:30px;height:3px;background:repeating-linear-gradient(90deg,#d4d4d4 0,#d4d4d4 1.5px,rgba(0,0,0,0) 1.5px,rgba(0,0,0,0) 2px);opacity:0.50"></div><div class="a" style="left:56px;top:68px;width:6px;height:3px;background:repeating-linear-gradient(90deg,#d4d4d4 0,#d4d4d4 1.5px,rgba(0,0,0,0) 1.5px,rgba(0,0,0,0) 2px);opacity:0.50"></div><div class="a" style="left:24px;top:72px;width:28px;height:3px;background:repeating-linear-gradient(90deg,#d4d4d4 0,#d4d4d4 1.5px,rgba(0,0,0,0) 1.5px,rgba(0,0,0,0) 2px);opacity:0.50"></div><div class="a" style="left:54px;top:72px;width:6px;height:3px;background:repeating-linear-gradient(90deg,#d4d4d4 0,#d4d4d4 1.5px,rgba(0,0,0,0) 1.5px,rgba(0,0,0,0) 2px);opacity:0.50"></div><div class="a" style="left:8px;top:76px;width:2px;height:3px;background:repeating-linear-gradient(90deg,#ffd700 0,#ffd700 1.5px,rgba(0,0,0,0) 1.5px,rgba(0,0,0,0) 2px);opacity:0.50"></div><div class="a" style="left:8px;top:80px;width:6px;height:3px;background:repeating-linear-gradient(90deg,#569cd6 0,#569cd6 1.5px,rgba(0,0,0,0) 1.5px,rgba(0,0,0,0) 2px);opacity:0.50"></div><div class="a" style="left:14px;top:80px;width:2px;height:3px;background:repeating-linear-gradient(90deg,#ffd700 0,#ffd700 1.5px,rgba(0,0,0,0) 1.5px,rgba(0,0,0,0) 2px);opacity:0.50"></div><div class="a" style="left:16px;top:80px;width:20px;height:3px;background:repeating-linear-gradient(90deg,#d4d4d4 0,#d4d4d4 1.5px,rgba(0,0,0,0) 1.5px,rgba(0,0,0,0) 2px);opacity:0.50"></div><div class="a" style="left:38px;top:80px;width:28px;height:3px;background:repeating-linear-gradient(90deg,#d4d4d4 0,#d4d4d4 1.5px,rgba(0,0,0,0) 1.5px,rgba(0,0,0,0) 2px);opacity:0.50"></div><div class="a" style="left:66px;top:80px;width:2px;height:3px;background:repeating-linear-gradient(90deg,#ffd700 0,#ffd700 1.5px,rgba(0,0,0,0) 1.5px,rgba(0,0,0,0) 2px);opacity:0.50"></div><div class="a" style="left:8px;top:84px;width:30px;height:3px;background:repeating-linear-gradient(90deg,#569cd6 0,#569cd6 1.5px,rgba(0,0,0,0) 1.5px,rgba(0,0,0,0) 2px);opacity:0.50"></div><div class="a" style="left:38px;top:84px;width:2px;height:3px;background:repeating-linear-gradient(90deg,#ffd700 0,#ffd700 1.5px,rgba(0,0,0,0) 1.5px,rgba(0,0,0,0) 2px);opacity:0.50"></div><div class="a" style="left:24px;top:88px;width:14px;height:3px;background:repeating-linear-gradient(90deg,#569cd6 0,#569cd6 1.5px,rgba(0,0,0,0) 1.5px,rgba(0,0,0,0) 2px);opacity:0.50"></div><div class="a" style="left:40px;top:88px;width:6px;height:3px;background:repeating-linear-gradient(90deg,#d4d4d4 0,#d4d4d4 1.5px,rgba(0,0,0,0) 1.5px,rgba(0,0,0,0) 2px);opacity:0.50"></div><div class="a" style="left:48px;top:88px;width:4px;height:3px;background:repeating-linear-gradient(90deg,#d4d4d4 0,#d4d4d4 1.5px,rgba(0,0,0,0) 1.5px,rgba(0,0,0,0) 2px);opacity:0.50"></div><div class="a" style="left:54px;top:88px;width:26px;height:3px;background:repeating-linear-gradient(90deg,#569cd6 0,#569cd6 1.5px,rgba(0,0,0,0) 1.5px,rgba(0,0,0,0) 2px);opacity:0.50"></div><div class="a" style="left:24px;top:92px;width:30px;height:3px;background:repeating-linear-gradient(90deg,#d4d4d4 0,#d4d4d4 1.5px,rgba(0,0,0,0) 1.5px,rgba(0,0,0,0) 2px);opacity:0.50"></div><div class="a" style="left:56px;top:92px;width:6px;height:3px;background:repeating-linear-gradient(90deg,#d4d4d4 0,#d4d4d4 1.5px,rgba(0,0,0,0) 1.5px,rgba(0,0,0,0) 2px);opacity:0.50"></div><div class="a" style="left:24px;top:96px;width:28px;height:3px;background:repeating-linear-gradient(90deg,#d4d4d4 0,#d4d4d4 1.5px,rgba(0,0,0,0) 1.5px,rgba(0,0,0,0) 2px);opacity:0.50"></div><div class="a" style="left:54px;top:96px;width:6px;height:3px;background:repeating-linear-gradient(90deg,#d4d4d4 0,#d4d4d4 1.5px,rgba(0,0,0,0) 1.5px,rgba(0,0,0,0) 2px);opacity:0.50"></div><div class="a" style="left:8px;top:100px;width:2px;height:3px;background:repeating-linear-gradient(90deg,#ffd700 0,#ffd700 1.5px,rgba(0,0,0,0) 1.5px,rgba(0,0,0,0) 2px);opacity:0.50"></div><div class="a" style="left:8px;top:104px;width:4px;height:3px;background:repeating-linear-gradient(90deg,#569cd6 0,#569cd6 1.5px,rgba(0,0,0,0) 1.5px,rgba(0,0,0,0) 2px);opacity:0.50"></div><div class="a" style="left:14px;top:104px;width:2px;height:3px;background:repeating-linear-gradient(90deg,#ffd700 0,#ffd700 1.5px,rgba(0,0,0,0) 1.5px,rgba(0,0,0,0) 2px);opacity:0.50"></div><div class="a" style="left:16px;top:104px;width:6px;height:3px;background:repeating-linear-gradient(90deg,#d4d4d4 0,#d4d4d4 1.5px,rgba(0,0,0,0) 1.5px,rgba(0,0,0,0) 2px);opacity:0.50"></div><div class="a" style="left:22px;top:104px;width:2px;height:3px;background:repeating-linear-gradient(90deg,#ffd700 0,#ffd700 1.5px,rgba(0,0,0,0) 1.5px,rgba(0,0,0,0) 2px);opacity:0.50"></div><div class="a" style="left:16px;top:108px;width:14px;height:3px;background:repeating-linear-gradient(90deg,#569cd6 0,#569cd6 1.5px,rgba(0,0,0,0) 1.5px,rgba(0,0,0,0) 2px);opacity:0.50"></div><div class="a" style="left:30px;top:108px;width:2px;height:3px;background:repeating-linear-gradient(90deg,#ffd700 0,#ffd700 1.5px,rgba(0,0,0,0) 1.5px,rgba(0,0,0,0) 2px);opacity:0.50"></div><div class="a" style="left:32px;top:108px;width:46px;height:3px;background:repeating-linear-gradient(90deg,#ce9178 0,#ce9178 1.5px,rgba(0,0,0,0) 1.5px,rgba(0,0,0,0) 2px);opacity:0.50"></div><div class="a" style="left:80px;top:108px;width:14px;height:3px;background:repeating-linear-gradient(90deg,#ce9178 0,#ce9178 1.5px,rgba(0,0,0,0) 1.5px,rgba(0,0,0,0) 2px);opacity:0.50"></div><div class="a" style="left:94px;top:108px;width:2px;height:3px;background:repeating-linear-gradient(90deg,#ffd700 0,#ffd700 1.5px,rgba(0,0,0,0) 1.5px,rgba(0,0,0,0) 2px);opacity:0.50"></div><div class="a" style="left:8px;top:112px;width:10px;height:3px;background:repeating-linear-gradient(90deg,#569cd6 0,#569cd6 1.5px,rgba(0,0,0,0) 1.5px,rgba(0,0,0,0) 2px);opacity:0.50"></div><div class="a" style="left:20px;top:112px;width:4px;height:3px;background:repeating-linear-gradient(90deg,#ffd700 0,#ffd700 1.5px,rgba(0,0,0,0) 1.5px,rgba(0,0,0,0) 2px);opacity:0.50"></div><div class="a" style="left:8px;top:116px;width:4px;height:3px;background:repeating-linear-gradient(90deg,#569cd6 0,#569cd6 1.5px,rgba(0,0,0,0) 1.5px,rgba(0,0,0,0) 2px);opacity:0.50"></div><div class="a" style="left:14px;top:116px;width:2px;height:3px;background:repeating-linear-gradient(90deg,#ffd700 0,#ffd700 1.5px,rgba(0,0,0,0) 1.5px,rgba(0,0,0,0) 2px);opacity:0.50"></div><div class="a" style="left:16px;top:116px;width:6px;height:3px;background:repeating-linear-gradient(90deg,#d4d4d4 0,#d4d4d4 1.5px,rgba(0,0,0,0) 1.5px,rgba(0,0,0,0) 2px);opacity:0.50"></div><div class="a" style="left:22px;top:116px;width:2px;height:3px;background:repeating-linear-gradient(90deg,#ffd700 0,#ffd700 1.5px,rgba(0,0,0,0) 1.5px,rgba(0,0,0,0) 2px);opacity:0.50"></div><div class="a" style="left:16px;top:120px;width:14px;height:3px;background:repeating-linear-gradient(90deg,#569cd6 0,#569cd6 1.5px,rgba(0,0,0,0) 1.5px,rgba(0,0,0,0) 2px);opacity:0.50"></div><div class="a" style="left:30px;top:120px;width:2px;height:3px;background:repeating-linear-gradient(90deg,#ffd700 0,#ffd700 1.5px,rgba(0,0,0,0) 1.5px,rgba(0,0,0,0) 2px);opacity:0.50"></div><div class="a" style="left:32px;top:120px;width:46px;height:3px;background:repeating-linear-gradient(90deg,#ce9178 0,#ce9178 1.5px,rgba(0,0,0,0) 1.5px,rgba(0,0,0,0) 2px);opacity:0.50"></div><div class="a" style="left:80px;top:120px;width:14px;height:3px;background:repeating-linear-gradient(90deg,#ce9178 0,#ce9178 1.5px,rgba(0,0,0,0) 1.5px,rgba(0,0,0,0) 2px);opacity:0.50"></div><div class="a" style="left:94px;top:120px;width:2px;height:3px;background:repeating-linear-gradient(90deg,#ffd700 0,#ffd700 1.5px,rgba(0,0,0,0) 1.5px,rgba(0,0,0,0) 2px);opacity:0.50"></div><div class="a" style="left:8px;top:124px;width:10px;height:3px;background:repeating-linear-gradient(90deg,#569cd6 0,#569cd6 1.5px,rgba(0,0,0,0) 1.5px,rgba(0,0,0,0) 2px);opacity:0.50"></div><div class="a" style="left:20px;top:124px;width:4px;height:3px;background:repeating-linear-gradient(90deg,#ffd700 0,#ffd700 1.5px,rgba(0,0,0,0) 1.5px,rgba(0,0,0,0) 2px);opacity:0.50"></div><div class="a" style="left:8px;top:128px;width:4px;height:3px;background:repeating-linear-gradient(90deg,#569cd6 0,#569cd6 1.5px,rgba(0,0,0,0) 1.5px,rgba(0,0,0,0) 2px);opacity:0.50"></div><div class="a" style="left:14px;top:128px;width:2px;height:3px;background:repeating-linear-gradient(90deg,#ffd700 0,#ffd700 1.5px,rgba(0,0,0,0) 1.5px,rgba(0,0,0,0) 2px);opacity:0.50"></div><div class="a" style="left:16px;top:128px;width:6px;height:3px;background:repeating-linear-gradient(90deg,#d4d4d4 0,#d4d4d4 1.5px,rgba(0,0,0,0) 1.5px,rgba(0,0,0,0) 2px);opacity:0.50"></div><div class="a" style="left:22px;top:128px;width:2px;height:3px;background:repeating-linear-gradient(90deg,#ffd700 0,#ffd700 1.5px,rgba(0,0,0,0) 1.5px,rgba(0,0,0,0) 2px);opacity:0.50"></div><div class="a" style="left:16px;top:132px;width:14px;height:3px;background:repeating-linear-gradient(90deg,#569cd6 0,#569cd6 1.5px,rgba(0,0,0,0) 1.5px,rgba(0,0,0,0) 2px);opacity:0.50"></div><div class="a" style="left:30px;top:132px;width:2px;height:3px;background:repeating-linear-gradient(90deg,#ffd700 0,#ffd700 1.5px,rgba(0,0,0,0) 1.5px,rgba(0,0,0,0) 2px);opacity:0.50"></div><div class="a" style="left:32px;top:132px;width:14px;height:3px;background:repeating-linear-gradient(90deg,#d4d4d4 0,#d4d4d4 1.5px,rgba(0,0,0,0) 1.5px,rgba(0,0,0,0) 2px);opacity:0.50"></div><div class="a" style="left:48px;top:132px;width:46px;height:3px;background:repeating-linear-gradient(90deg,#ce9178 0,#ce9178 1.5px,rgba(0,0,0,0) 1.5px,rgba(0,0,0,0) 2px);opacity:0.50"></div><div class="a" style="left:96px;top:132px;width:14px;height:3px;background:repeating-linear-gradient(90deg,#ce9178 0,#ce9178 1.5px,rgba(0,0,0,0) 1.5px,rgba(0,0,0,0) 2px);opacity:0.50"></div><div class="a" style="left:110px;top:132px;width:2px;height:3px;background:repeating-linear-gradient(90deg,#ffd700 0,#ffd700 1.5px,rgba(0,0,0,0) 1.5px,rgba(0,0,0,0) 2px);opacity:0.50"></div><div class="a" style="left:8px;top:136px;width:10px;height:3px;background:repeating-linear-gradient(90deg,#569cd6 0,#569cd6 1.5px,rgba(0,0,0,0) 1.5px,rgba(0,0,0,0) 2px);opacity:0.50"></div><div class="a" style="left:20px;top:136px;width:4px;height:3px;background:repeating-linear-gradient(90deg,#ffd700 0,#ffd700 1.5px,rgba(0,0,0,0) 1.5px,rgba(0,0,0,0) 2px);opacity:0.50"></div><div class="a" style="left:8px;top:140px;width:4px;height:3px;background:repeating-linear-gradient(90deg,#569cd6 0,#569cd6 1.5px,rgba(0,0,0,0) 1.5px,rgba(0,0,0,0) 2px);opacity:0.50"></div><div class="a" style="left:14px;top:140px;width:2px;height:3px;background:repeating-linear-gradient(90deg,#ffd700 0,#ffd700 1.5px,rgba(0,0,0,0) 1.5px,rgba(0,0,0,0) 2px);opacity:0.50"></div><div class="a" style="left:16px;top:140px;width:6px;height:3px;background:repeating-linear-gradient(90deg,#d4d4d4 0,#d4d4d4 1.5px,rgba(0,0,0,0) 1.5px,rgba(0,0,0,0) 2px);opacity:0.50"></div><div class="a" style="left:22px;top:140px;width:2px;height:3px;background:repeating-linear-gradient(90deg,#ffd700 0,#ffd700 1.5px,rgba(0,0,0,0) 1.5px,rgba(0,0,0,0) 2px);opacity:0.50"></div><div class="a" style="left:16px;top:144px;width:14px;height:3px;background:repeating-linear-gradient(90deg,#569cd6 0,#569cd6 1.5px,rgba(0,0,0,0) 1.5px,rgba(0,0,0,0) 2px);opacity:0.50"></div><div class="a" style="left:30px;top:144px;width:2px;height:3px;background:repeating-linear-gradient(90deg,#ffd700 0,#ffd700 1.5px,rgba(0,0,0,0) 1.5px,rgba(0,0,0,0) 2px);opacity:0.50"></div><div class="a" style="left:32px;top:144px;width:14px;height:3px;background:repeating-linear-gradient(90deg,#d4d4d4 0,#d4d4d4 1.5px,rgba(0,0,0,0) 1.5px,rgba(0,0,0,0) 2px);opacity:0.50"></div><div class="a" style="left:48px;top:144px;width:46px;height:3px;background:repeating-linear-gradient(90deg,#ce9178 0,#ce9178 1.5px,rgba(0,0,0,0) 1.5px,rgba(0,0,0,0) 2px);opacity:0.50"></div><div class="a" style="left:96px;top:144px;width:14px;height:3px;background:repeating-linear-gradient(90deg,#ce9178 0,#ce9178 1.5px,rgba(0,0,0,0) 1.5px,rgba(0,0,0,0) 2px);opacity:0.50"></div><div class="a" style="left:110px;top:144px;width:2px;height:3px;background:repeating-linear-gradient(90deg,#ffd700 0,#ffd700 1.5px,rgba(0,0,0,0) 1.5px,rgba(0,0,0,0) 2px);opacity:0.50"></div><div class="a" style="left:8px;top:148px;width:10px;height:3px;background:repeating-linear-gradient(90deg,#569cd6 0,#569cd6 1.5px,rgba(0,0,0,0) 1.5px,rgba(0,0,0,0) 2px);opacity:0.50"></div><div class="a" style="left:20px;top:148px;width:4px;height:3px;background:repeating-linear-gradient(90deg,#ffd700 0,#ffd700 1.5px,rgba(0,0,0,0) 1.5px,rgba(0,0,0,0) 2px);opacity:0.50"></div><div class="a" style="left:0px;top:152px;width:10px;height:3px;background:repeating-linear-gradient(90deg,#569cd6 0,#569cd6 1.5px,rgba(0,0,0,0) 1.5px,rgba(0,0,0,0) 2px);opacity:0.50"></div><div class="a" style="left:12px;top:152px;width:4px;height:3px;background:repeating-linear-gradient(90deg,#ffd700 0,#ffd700 1.5px,rgba(0,0,0,0) 1.5px,rgba(0,0,0,0) 2px);opacity:0.50"></div><div class="a" style="left:0px;top:156px;width:14px;height:3px;background:repeating-linear-gradient(90deg,#569cd6 0,#569cd6 1.5px,rgba(0,0,0,0) 1.5px,rgba(0,0,0,0) 2px);opacity:0.50"></div><div class="a" style="left:14px;top:156px;width:2px;height:3px;background:repeating-linear-gradient(90deg,#ffd700 0,#ffd700 1.5px,rgba(0,0,0,0) 1.5px,rgba(0,0,0,0) 2px);opacity:0.50"></div><div class="a" style="left:16px;top:156px;width:12px;height:3px;background:repeating-linear-gradient(90deg,#d4d4d4 0,#d4d4d4 1.5px,rgba(0,0,0,0) 1.5px,rgba(0,0,0,0) 2px);opacity:0.50"></div><div class="a" style="left:30px;top:156px;width:8px;height:3px;background:repeating-linear-gradient(90deg,#ce9178 0,#ce9178 1.5px,rgba(0,0,0,0) 1.5px,rgba(0,0,0,0) 2px);opacity:0.50"></div><div class="a" style="left:40px;top:156px;width:24px;height:3px;background:repeating-linear-gradient(90deg,#ce9178 0,#ce9178 1.5px,rgba(0,0,0,0) 1.5px,rgba(0,0,0,0) 2px);opacity:0.50"></div><div class="a" style="left:64px;top:156px;width:2px;height:3px;background:repeating-linear-gradient(90deg,#ffd700 0,#ffd700 1.5px,rgba(0,0,0,0) 1.5px,rgba(0,0,0,0) 2px);opacity:0.50"></div><div class="a" style="left:0px;top:164px;width:2px;height:3px;background:repeating-linear-gradient(90deg,#6a9955 0,#6a9955 1.5px,rgba(0,0,0,0) 1.5px,rgba(0,0,0,0) 2px);opacity:0.50"></div><div class="a" style="left:4px;top:164px;width:98px;height:3px;background:repeating-linear-gradient(90deg,#6a9955 0,#6a9955 1.5px,rgba(0,0,0,0) 1.5px,rgba(0,0,0,0) 2px);opacity:0.50"></div><div class="a" style="left:0px;top:168px;width:4px;height:3px;background:repeating-linear-gradient(90deg,#569cd6 0,#569cd6 1.5px,rgba(0,0,0,0) 1.5px,rgba(0,0,0,0) 2px);opacity:0.50"></div><div class="a" style="left:6px;top:168px;width:2px;height:3px;background:repeating-linear-gradient(90deg,#ffd700 0,#ffd700 1.5px,rgba(0,0,0,0) 1.5px,rgba(0,0,0,0) 2px);opacity:0.50"></div><div class="a" style="left:8px;top:168px;width:10px;height:3px;background:repeating-linear-gradient(90deg,#d4d4d4 0,#d4d4d4 1.5px,rgba(0,0,0,0) 1.5px,rgba(0,0,0,0) 2px);opacity:0.50"></div><div class="a" style="left:18px;top:168px;width:2px;height:3px;background:repeating-linear-gradient(90deg,#ffd700 0,#ffd700 1.5px,rgba(0,0,0,0) 1.5px,rgba(0,0,0,0) 2px);opacity:0.50"></div><div class="a" style="left:8px;top:172px;width:2px;height:3px;background:repeating-linear-gradient(90deg,#6a9955 0,#6a9955 1.5px,rgba(0,0,0,0) 1.5px,rgba(0,0,0,0) 2px);opacity:0.50"></div><div class="a" style="left:12px;top:172px;width:6px;height:3px;background:repeating-linear-gradient(90deg,#6a9955 0,#6a9955 1.5px,rgba(0,0,0,0) 1.5px,rgba(0,0,0,0) 2px);opacity:0.50"></div><div class="a" style="left:8px;top:176px;width:2px;height:3px;background:repeating-linear-gradient(90deg,#6a9955 0,#6a9955 1.5px,rgba(0,0,0,0) 1.5px,rgba(0,0,0,0) 2px);opacity:0.50"></div><div class="a" style="left:12px;top:176px;width:12px;height:3px;background:repeating-linear-gradient(90deg,#6a9955 0,#6a9955 1.5px,rgba(0,0,0,0) 1.5px,rgba(0,0,0,0) 2px);opacity:0.50"></div><div class="a" style="left:8px;top:180px;width:2px;height:3px;background:repeating-linear-gradient(90deg,#6a9955 0,#6a9955 1.5px,rgba(0,0,0,0) 1.5px,rgba(0,0,0,0) 2px);opacity:0.50"></div><div class="a" style="left:12px;top:180px;width:16px;height:3px;background:repeating-linear-gradient(90deg,#6a9955 0,#6a9955 1.5px,rgba(0,0,0,0) 1.5px,rgba(0,0,0,0) 2px);opacity:0.50"></div><div class="a" style="left:30px;top:180px;width:12px;height:3px;background:repeating-linear-gradient(90deg,#6a9955 0,#6a9955 1.5px,rgba(0,0,0,0) 1.5px,rgba(0,0,0,0) 2px);opacity:0.50"></div><div class="a" style="left:44px;top:180px;width:18px;height:3px;background:repeating-linear-gradient(90deg,#6a9955 0,#6a9955 1.5px,rgba(0,0,0,0) 1.5px,rgba(0,0,0,0) 2px);opacity:0.50"></div><div class="a" style="left:64px;top:180px;width:8px;height:3px;background:repeating-linear-gradient(90deg,#6a9955 0,#6a9955 1.5px,rgba(0,0,0,0) 1.5px,rgba(0,0,0,0) 2px);opacity:0.50"></div><div class="a" style="left:74px;top:180px;width:4px;height:3px;background:repeating-linear-gradient(90deg,#6a9955 0,#6a9955 1.5px,rgba(0,0,0,0) 1.5px,rgba(0,0,0,0) 2px);opacity:0.50"></div><div class="a" style="left:8px;top:184px;width:2px;height:3px;background:repeating-linear-gradient(90deg,#6a9955 0,#6a9955 1.5px,rgba(0,0,0,0) 1.5px,rgba(0,0,0,0) 2px);opacity:0.50"></div><div class="a" style="left:12px;top:184px;width:28px;height:3px;background:repeating-linear-gradient(90deg,#6a9955 0,#6a9955 1.5px,rgba(0,0,0,0) 1.5px,rgba(0,0,0,0) 2px);opacity:0.50"></div><div class="a" style="left:42px;top:184px;width:12px;height:3px;background:repeating-linear-gradient(90deg,#6a9955 0,#6a9955 1.5px,rgba(0,0,0,0) 1.5px,rgba(0,0,0,0) 2px);opacity:0.50"></div><div class="a" style="left:56px;top:184px;width:18px;height:3px;background:repeating-linear-gradient(90deg,#6a9955 0,#6a9955 1.5px,rgba(0,0,0,0) 1.5px,rgba(0,0,0,0) 2px);opacity:0.50"></div><div class="a" style="left:76px;top:184px;width:12px;height:3px;background:repeating-linear-gradient(90deg,#6a9955 0,#6a9955 1.5px,rgba(0,0,0,0) 1.5px,rgba(0,0,0,0) 2px);opacity:0.50"></div><div class="a" style="left:90px;top:184px;width:4px;height:3px;background:repeating-linear-gradient(90deg,#6a9955 0,#6a9955 1.5px,rgba(0,0,0,0) 1.5px,rgba(0,0,0,0) 2px);opacity:0.50"></div><div class="a" style="left:8px;top:188px;width:4px;height:3px;background:repeating-linear-gradient(90deg,#569cd6 0,#569cd6 1.5px,rgba(0,0,0,0) 1.5px,rgba(0,0,0,0) 2px);opacity:0.50"></div><div class="a" style="left:14px;top:188px;width:2px;height:3px;background:repeating-linear-gradient(90deg,#ffd700 0,#ffd700 1.5px,rgba(0,0,0,0) 1.5px,rgba(0,0,0,0) 2px);opacity:0.50"></div><div class="a" style="left:16px;top:188px;width:6px;height:3px;background:repeating-linear-gradient(90deg,#569cd6 0,#569cd6 1.5px,rgba(0,0,0,0) 1.5px,rgba(0,0,0,0) 2px);opacity:0.50"></div><div class="a" style="left:24px;top:188px;width:12px;height:3px;background:repeating-linear-gradient(90deg,#569cd6 0,#569cd6 1.5px,rgba(0,0,0,0) 1.5px,rgba(0,0,0,0) 2px);opacity:0.50"></div><div class="a" style="left:38px;top:188px;width:2px;height:3px;background:repeating-linear-gradient(90deg,#569cd6 0,#569cd6 1.5px,rgba(0,0,0,0) 1.5px,rgba(0,0,0,0) 2px);opacity:0.50"></div><div class="a" style="left:40px;top:188px;width:2px;height:3px;background:repeating-linear-gradient(90deg,#da70d6 0,#da70d6 1.5px,rgba(0,0,0,0) 1.5px,rgba(0,0,0,0) 2px);opacity:0.50"></div><div class="a" style="left:42px;top:188px;width:44px;height:3px;background:repeating-linear-gradient(90deg,#569cd6 0,#569cd6 1.5px,rgba(0,0,0,0) 1.5px,rgba(0,0,0,0) 2px);opacity:0.50"></div><div class="a" style="left:86px;top:188px;width:2px;height:3px;background:repeating-linear-gradient(90deg,#da70d6 0,#da70d6 1.5px,rgba(0,0,0,0) 1.5px,rgba(0,0,0,0) 2px);opacity:0.50"></div><div class="a" style="left:88px;top:188px;width:2px;height:3px;background:repeating-linear-gradient(90deg,#ffd700 0,#ffd700 1.5px,rgba(0,0,0,0) 1.5px,rgba(0,0,0,0) 2px);opacity:0.50"></div><div class="a" style="left:16px;top:192px;width:30px;height:3px;background:repeating-linear-gradient(90deg,#569cd6 0,#569cd6 1.5px,rgba(0,0,0,0) 1.5px,rgba(0,0,0,0) 2px);opacity:0.50"></div><div class="a" style="left:46px;top:192px;width:2px;height:3px;background:repeating-linear-gradient(90deg,#ffd700 0,#ffd700 1.5px,rgba(0,0,0,0) 1.5px,rgba(0,0,0,0) 2px);opacity:0.50"></div><div class="a" style="left:32px;top:196px;width:14px;height:3px;background:repeating-linear-gradient(90deg,#569cd6 0,#569cd6 1.5px,rgba(0,0,0,0) 1.5px,rgba(0,0,0,0) 2px);opacity:0.50"></div><div class="a" style="left:48px;top:196px;width:4px;height:3px;background:repeating-linear-gradient(90deg,#d4d4d4 0,#d4d4d4 1.5px,rgba(0,0,0,0) 1.5px,rgba(0,0,0,0) 2px);opacity:0.50"></div><div class="a" style="left:54px;top:196px;width:4px;height:3px;background:repeating-linear-gradient(90deg,#d4d4d4 0,#d4d4d4 1.5px,rgba(0,0,0,0) 1.5px,rgba(0,0,0,0) 2px);opacity:0.50"></div><div class="a" style="left:60px;top:196px;width:2px;height:3px;background:repeating-linear-gradient(90deg,#569cd6 0,#569cd6 1.5px,rgba(0,0,0,0) 1.5px,rgba(0,0,0,0) 2px);opacity:0.50"></div><div class="a" style="left:62px;top:196px;width:2px;height:3px;background:repeating-linear-gradient(90deg,#da70d6 0,#da70d6 1.5px,rgba(0,0,0,0) 1.5px,rgba(0,0,0,0) 2px);opacity:0.50"></div><div class="a" style="left:64px;top:196px;width:48px;height:3px;background:repeating-linear-gradient(90deg,#569cd6 0,#569cd6 1.5px,rgba(0,0,0,0) 1.5px,rgba(0,0,0,0) 2px);opacity:0.50"></div><div class="a" style="left:112px;top:196px;width:2px;height:3px;background:repeating-linear-gradient(90deg,#da70d6 0,#da70d6 1.5px,rgba(0,0,0,0) 1.5px,rgba(0,0,0,0) 2px);opacity:0.50"></div><div class="a" style="left:32px;top:200px;width:14px;height:3px;background:repeating-linear-gradient(90deg,#569cd6 0,#569cd6 1.5px,rgba(0,0,0,0) 1.5px,rgba(0,0,0,0) 2px);opacity:0.50"></div><div class="a" style="left:48px;top:200px;width:18px;height:3px;background:repeating-linear-gradient(90deg,#d4d4d4 0,#d4d4d4 1.5px,rgba(0,0,0,0) 1.5px,rgba(0,0,0,0) 2px);opacity:0.50"></div><div class="a" style="left:68px;top:200px;width:8px;height:3px;background:repeating-linear-gradient(90deg,#d4d4d4 0,#d4d4d4 1.5px,rgba(0,0,0,0) 1.5px,rgba(0,0,0,0) 2px);opacity:0.50"></div><div class="a" style="left:78px;top:200px;width:4px;height:3px;background:repeating-linear-gradient(90deg,#d4d4d4 0,#d4d4d4 1.5px,rgba(0,0,0,0) 1.5px,rgba(0,0,0,0) 2px);opacity:0.50"></div><div class="a" style="left:84px;top:200px;width:2px;height:3px;background:repeating-linear-gradient(90deg,#569cd6 0,#569cd6 1.5px,rgba(0,0,0,0) 1.5px,rgba(0,0,0,0) 2px);opacity:0.50"></div><div class="a" style="left:86px;top:200px;width:2px;height:3px;background:repeating-linear-gradient(90deg,#da70d6 0,#da70d6 1.5px,rgba(0,0,0,0) 1.5px,rgba(0,0,0,0) 2px);opacity:0.50"></div><div class="a" style="left:88px;top:200px;width:44px;height:3px;background:repeating-linear-gradient(90deg,#569cd6 0,#569cd6 1.5px,rgba(0,0,0,0) 1.5px,rgba(0,0,0,0) 2px);opacity:0.50"></div><div class="a" style="left:132px;top:200px;width:2px;height:3px;background:repeating-linear-gradient(90deg,#da70d6 0,#da70d6 1.5px,rgba(0,0,0,0) 1.5px,rgba(0,0,0,0) 2px);opacity:0.50"></div><div class="a" style="left:16px;top:204px;width:2px;height:3px;background:repeating-linear-gradient(90deg,#ffd700 0,#ffd700 1.5px,rgba(0,0,0,0) 1.5px,rgba(0,0,0,0) 2px);opacity:0.50"></div><div class="a" style="left:8px;top:208px;width:10px;height:3px;background:repeating-linear-gradient(90deg,#569cd6 0,#569cd6 1.5px,rgba(0,0,0,0) 1.5px,rgba(0,0,0,0) 2px);opacity:0.50"></div><div class="a" style="left:20px;top:208px;width:4px;height:3px;background:repeating-linear-gradient(90deg,#ffd700 0,#ffd700 1.5px,rgba(0,0,0,0) 1.5px,rgba(0,0,0,0) 2px);opacity:0.50"></div><div class="a" style="left:8px;top:212px;width:14px;height:3px;background:repeating-linear-gradient(90deg,#569cd6 0,#569cd6 1.5px,rgba(0,0,0,0) 1.5px,rgba(0,0,0,0) 2px);opacity:0.50"></div><div class="a" style="left:22px;top:212px;width:2px;height:3px;background:repeating-linear-gradient(90deg,#ffd700 0,#ffd700 1.5px,rgba(0,0,0,0) 1.5px,rgba(0,0,0,0) 2px);opacity:0.50"></div><div class="a" style="left:24px;top:212px;width:12px;height:3px;background:repeating-linear-gradient(90deg,#d4d4d4 0,#d4d4d4 1.5px,rgba(0,0,0,0) 1.5px,rgba(0,0,0,0) 2px);opacity:0.50"></div><div class="a" style="left:38px;top:212px;width:8px;height:3px;background:repeating-linear-gradient(90deg,#ce9178 0,#ce9178 1.5px,rgba(0,0,0,0) 1.5px,rgba(0,0,0,0) 2px);opacity:0.50"></div><div class="a" style="left:48px;top:212px;width:40px;height:3px;background:repeating-linear-gradient(90deg,#ce9178 0,#ce9178 1.5px,rgba(0,0,0,0) 1.5px,rgba(0,0,0,0) 2px);opacity:0.50"></div><div class="a" style="left:88px;top:212px;width:2px;height:3px;background:repeating-linear-gradient(90deg,#ffd700 0,#ffd700 1.5px,rgba(0,0,0,0) 1.5px,rgba(0,0,0,0) 2px);opacity:0.50"></div><div class="a" style="left:0px;top:216px;width:10px;height:3px;background:repeating-linear-gradient(90deg,#569cd6 0,#569cd6 1.5px,rgba(0,0,0,0) 1.5px,rgba(0,0,0,0) 2px);opacity:0.50"></div><div class="a" style="left:12px;top:216px;width:4px;height:3px;background:repeating-linear-gradient(90deg,#ffd700 0,#ffd700 1.5px,rgba(0,0,0,0) 1.5px,rgba(0,0,0,0) 2px);opacity:0.50"></div></div>
<div class="a" style="left:1811px;top:231px;width:3px;height:4px;background:#4e8a0a"></div>
<div class="a" style="left:1811px;top:238px;width:3px;height:60px;background:#1b81a8"></div>
<div class="a" style="left:1822px;top:238px;width:100px;height:4px;background:#6a6a6a"></div>
<div class="a" style="left:1926px;top:74px;width:1px;height:1478px;background:#404040"></div>
<div class="a" style="left:1928px;top:744px;width:26px;height:446px;background:#383838"></div>
<div class="a" style="left:1928px;top:797px;width:9px;height:18px;background:#4b6a2a"></div>
<div class="a" style="left:1928px;top:835px;width:9px;height:270px;background:#386275"></div>
<div class="a" style="left:1937px;top:833px;width:9px;height:18px;background:#8a8a8a"></div>
<div class="a" style="left:1928px;top:831px;width:26px;height:4px;background:#9a9a9a"></div>
<div class="a" style="left:1954px;top:0;width:2px;height:1552px;background:#444444"></div>
<div class="a" style="left:1956px;top:0;width:1570px;height:30px;background:#252526"></div>
<div class="a" style="left:1956px;top:0;width:292px;height:30px;background:#1e1e1e"></div>
<svg class="a" style="left:1989px;top:-16px" width="18" height="20"><g fill="#c5c5c5"><rect x="0" y="1" width="17" height="2.4"/><rect x="0" y="6" width="10" height="2.4"/><rect x="0" y="11" width="17" height="2.4"/><rect x="0" y="16" width="13" height="2.4"/></g></svg>
<div class="a ui" style="left:2019px;top:-27px;line-height:44px;color:#73c991">pbcopy.plist</div>
<div class="a ui" style="left:2177px;top:-27px;line-height:44px;color:#73c991">U</div>
<svg class="a" style="left:2210px;top:-17px" width="22" height="22"><path d="M2 2 L20 20 M20 2 L2 20" stroke="#c5c5c5" stroke-width="2.2"/></svg>
<div class="a ui" style="left:1987px;top:32px;line-height:44px;color:#a9a9a9">ssh</div>
<svg class="a" style="left:2037px;top:41px" width="16" height="22"><path d="M3 2 L12 11 L3 20" stroke="#a9a9a9" stroke-width="2" fill="none"/></svg>
<svg class="a" style="left:2075px;top:43px" width="18" height="20"><g fill="#c5c5c5"><rect x="0" y="1" width="17" height="2.4"/><rect x="0" y="6" width="10" height="2.4"/><rect x="0" y="11" width="17" height="2.4"/><rect x="0" y="16" width="13" height="2.4"/></g></svg>
<div class="a ui" style="left:2104px;top:31px;line-height:44px;color:#a9a9a9;font-size:27.5px">pbcopy.plist</div>
<div class="a" style="left:2096px;top:36px;width:167px;height:39px;border:4px solid #ff0000"></div>
<div class="a" style="left:1956px;top:74px;width:1458px;height:1478px;overflow:hidden">
<div class="a" style="left:183px;top:780px;width:1285px;height:60px;border:4px solid #282828"></div>
<div class="guide" style="left:183px;top:180px;height:60px;"></div>
<div class="guide" style="left:183px;top:240px;height:60px;"></div>
<div class="guide" style="left:279px;top:240px;height:60px;"></div>
<div class="guide" style="left:183px;top:300px;height:60px;"></div>
<div class="guide" style="left:279px;top:300px;height:60px;"></div>
<div class="guide" style="left:375px;top:300px;height:60px;"></div>
<div class="guide" style="left:183px;top:360px;height:60px;"></div>
<div class="guide" style="left:279px;top:360px;height:60px;"></div>
<div class="guide" style="left:183px;top:420px;height:60px;"></div>
<div class="guide" style="left:279px;top:420px;height:60px;"></div>
<div class="guide" style="left:183px;top:480px;height:60px;"></div>
<div class="guide" style="left:279px;top:480px;height:60px;"></div>
<div class="guide" style="left:375px;top:480px;height:60px;"></div>
<div class="guide" style="left:183px;top:540px;height:60px;"></div>
<div class="guide" style="left:279px;top:540px;height:60px;"></div>
<div class="guide" style="left:183px;top:600px;height:60px;"></div>
<div class="guide" style="left:279px;top:600px;height:60px;"></div>
<div class="guide" style="left:183px;top:660px;height:60px;"></div>
<div class="guide" style="left:279px;top:660px;height:60px;"></div>
<div class="guide" style="left:183px;top:720px;height:60px;"></div>
<div class="guide" style="left:279px;top:720px;height:60px;"></div>
<div class="guide" style="left:375px;top:720px;height:60px;background:#707070"></div>
<div class="guide" style="left:183px;top:780px;height:60px;"></div>
<div class="guide" style="left:279px;top:780px;height:60px;"></div>
<div class="guide" style="left:375px;top:780px;height:60px;background:#707070"></div>
<div class="guide" style="left:183px;top:840px;height:60px;"></div>
<div class="guide" style="left:279px;top:840px;height:60px;"></div>
<div class="guide" style="left:183px;top:900px;height:60px;"></div>
<div class="guide" style="left:279px;top:900px;height:60px;"></div>
<div class="guide" style="left:183px;top:960px;height:60px;"></div>
<div class="guide" style="left:279px;top:960px;height:60px;"></div>
<div class="guide" style="left:183px;top:1020px;height:60px;"></div>
<div class="guide" style="left:279px;top:1020px;height:60px;"></div>
<div class="guide" style="left:375px;top:1020px;height:60px;"></div>
<div class="guide" style="left:183px;top:1080px;height:60px;"></div>
<div class="guide" style="left:279px;top:1080px;height:60px;"></div>
<div class="guide" style="left:375px;top:1080px;height:60px;"></div>
<div class="guide" style="left:183px;top:1140px;height:60px;"></div>
<div class="guide" style="left:279px;top:1140px;height:60px;"></div>
<div class="guide" style="left:375px;top:1140px;height:60px;"></div>
<div class="guide" style="left:471px;top:1140px;height:60px;"></div>
<div class="guide" style="left:183px;top:1200px;height:60px;"></div>
<div class="guide" style="left:279px;top:1200px;height:60px;"></div>
<div class="guide" style="left:375px;top:1200px;height:60px;"></div>
<div class="guide" style="left:471px;top:1200px;height:60px;"></div>
<div class="guide" style="left:183px;top:1260px;height:60px;"></div>
<div class="guide" style="left:279px;top:1260px;height:60px;"></div>
<div class="guide" style="left:375px;top:1260px;height:60px;"></div>
<div class="guide" style="left:471px;top:1260px;height:60px;"></div>
<div class="guide" style="left:183px;top:1320px;height:60px;"></div>
<div class="guide" style="left:279px;top:1320px;height:60px;"></div>
<div class="guide" style="left:375px;top:1320px;height:60px;"></div>
<div class="guide" style="left:471px;top:1320px;height:60px;"></div>
<div class="guide" style="left:183px;top:1380px;height:60px;"></div>
<div class="guide" style="left:279px;top:1380px;height:60px;"></div>
<div class="guide" style="left:375px;top:1380px;height:60px;"></div>
<div class="guide" style="left:183px;top:1440px;height:60px;"></div>
<div class="guide" style="left:279px;top:1440px;height:60px;"></div>
<div class="a mono" style="left:183px;top:0px"><span style="color:#d4d4d4">&lt;?xml</span><span class="ws"> </span><span style="color:#d4d4d4">version=&quot;1.0&quot;</span><span class="ws"> </span><span style="color:#d4d4d4">encoding=&quot;UTF-8&quot;?&gt;</span></div>
<div class="a ln" style="left:-2px;top:0px;color:#858585">1</div>
<div class="a mono" style="left:183px;top:60px"><span style="color:#d4d4d4">&lt;!DOCTYPE</span><span class="ws"> </span><span style="color:#d4d4d4">plist</span><span class="ws"> </span><span style="color:#d4d4d4">PUBLIC</span><span class="ws"> </span><span style="color:#d4d4d4">&quot;-//Apple</span><span class="ws"> </span><span style="color:#d4d4d4">Computer//DTD</span><span class="ws"> </span><span style="color:#d4d4d4">PLIST</span><span class="ws"> </span><span style="color:#d4d4d4">1.0//EN&quot;</span><span class="ws"> </span><span style="color:#d4d4d4">&quot;-//PropertyList-1.0.dtd&quot;&gt;</span></div>
<div class="a ln" style="left:-2px;top:60px;color:#858585">2</div>
<div class="a mono" style="left:183px;top:120px"><span style="color:#d4d4d4">&lt;plist</span><span class="ws"> </span><span style="color:#d4d4d4">version=&quot;1.0&quot;&gt;</span></div>
<div class="a ln" style="left:-2px;top:120px;color:#858585">3</div>
<div class="a mono" style="left:183px;top:180px"><span class="ws">    </span><span style="color:#d4d4d4">&lt;dict&gt;</span></div>
<div class="a ln" style="left:-2px;top:180px;color:#858585">4</div>
<div class="a mono" style="left:183px;top:240px"><span class="ws">        </span><span style="color:#d4d4d4">&lt;key&gt;Label&lt;/key&gt;</span></div>
<div class="a ln" style="left:-2px;top:240px;color:#858585">5</div>
<div class="a mono" style="left:183px;top:300px"><span class="ws">            </span><span style="color:#d4d4d4">&lt;string&gt;localhost.pbcopy&lt;/string&gt;</span></div>
<div class="a ln" style="left:-2px;top:300px;color:#858585">6</div>
<div class="a mono" style="left:183px;top:360px"><span class="ws">        </span><span style="color:#d4d4d4">&lt;key&gt;ProgramArguments&lt;/key&gt;</span></div>
<div class="a ln" style="left:-2px;top:360px;color:#858585">7</div>
<div class="a mono" style="left:183px;top:420px"><span class="ws">        </span><span style="color:#d4d4d4">&lt;array&gt;</span></div>
<div class="a ln" style="left:-2px;top:420px;color:#858585">8</div>
<div class="a mono" style="left:183px;top:480px"><span class="ws">            </span><span style="color:#d4d4d4">&lt;string&gt;/usr/bin/pbcopy&lt;/string&gt;</span></div>
<div class="a ln" style="left:-2px;top:480px;color:#858585">9</div>
<div class="a mono" style="left:183px;top:540px"><span class="ws">        </span><span style="color:#d4d4d4">&lt;/array&gt;</span></div>
<div class="a ln" style="left:-2px;top:540px;color:#858585">10</div>
<div class="a mono" style="left:183px;top:600px"><span class="ws">        </span><span style="color:#d4d4d4">&lt;key&gt;inetdCompatibility&lt;/key&gt;</span></div>
<div class="a ln" style="left:-2px;top:600px;color:#858585">11</div>
<div class="a mono" style="left:183px;top:660px"><span class="ws">        </span><span style="color:#d4d4d4">&lt;dict&gt;</span></div>
<div class="a ln" style="left:-2px;top:660px;color:#858585">12</div>
<div class="a mono" style="left:183px;top:720px"><span class="ws">            </span><span style="color:#d4d4d4">&lt;key&gt;Wait&lt;/key&gt;</span></div>
<div class="a ln" style="left:-2px;top:720px;color:#858585">13</div>
<div class="a mono" style="left:183px;top:780px"><span class="ws">            </span><span style="color:#d4d4d4">&lt;false/&gt;</span></div>
<div class="a ln" style="left:-2px;top:780px;color:#c6c6c6">14</div>
<div class="a mono" style="left:183px;top:840px"><span class="ws">        </span><span style="color:#d4d4d4">&lt;/dict&gt;</span></div>
<div class="a ln" style="left:-2px;top:840px;color:#858585">15</div>
<div class="a mono" style="left:183px;top:900px"><span class="ws">        </span><span style="color:#d4d4d4">&lt;key&gt;Sockets&lt;/key&gt;</span></div>
<div class="a ln" style="left:-2px;top:900px;color:#858585">16</div>
<div class="a mono" style="left:183px;top:960px"><span class="ws">        </span><span style="color:#d4d4d4">&lt;dict&gt;</span></div>
<div class="a ln" style="left:-2px;top:960px;color:#858585">17</div>
<div class="a mono" style="left:183px;top:1020px"><span class="ws">            </span><span style="color:#d4d4d4">&lt;key&gt;Listeners&lt;/key&gt;</span></div>
<div class="a ln" style="left:-2px;top:1020px;color:#858585">18</div>
<div class="a mono" style="left:183px;top:1080px"><span class="ws">            </span><span style="color:#d4d4d4">&lt;dict&gt;</span></div>
<div class="a ln" style="left:-2px;top:1080px;color:#858585">19</div>
<div class="a mono" style="left:183px;top:1140px"><span class="ws">                </span><span style="color:#d4d4d4">&lt;key&gt;SockServiceName&lt;/key&gt;</span></div>
<div class="a ln" style="left:-2px;top:1140px;color:#858585">20</div>
<div class="a mono" style="left:183px;top:1200px"><span class="ws">                </span><span style="color:#d4d4d4">&lt;string&gt;22222&lt;/string&gt;</span></div>
<div class="a ln" style="left:-2px;top:1200px;color:#858585">21</div>
<div class="a mono" style="left:183px;top:1260px"><span class="ws">                </span><span style="color:#d4d4d4">&lt;key&gt;SockNodeName&lt;/key&gt;</span></div>
<div class="a ln" style="left:-2px;top:1260px;color:#858585">22</div>
<div class="a mono" style="left:183px;top:1320px"><span class="ws">                </span><span style="color:#d4d4d4">&lt;string&gt;127.0.0.1&lt;/string&gt;</span></div>
<div class="a ln" style="left:-2px;top:1320px;color:#858585">23</div>
<div class="a mono" style="left:183px;top:1380px"><span class="ws">            </span><span style="color:#d4d4d4">&lt;/dict&gt;</span></div>
<div class="a ln" style="left:-2px;top:1380px;color:#858585">24</div>
<div class="a mono" style="left:183px;top:1440px"><span class="ws">        </span><span style="color:#d4d4d4">&lt;/dict&gt;</span></div>
<div class="a ln" style="left:-2px;top:1440px;color:#858585">25</div>
</div>
<div class="a" style="left:3410px;top:74px;width:8px;height:1478px;background:linear-gradient(90deg,rgba(0,0,0,0),rgba(0,0,0,0.35))"></div>
<div class="a" style="left:3418px;top:74px;width:108px;height:1478px;background:#1e1e1e"></div>
<div class="a" style="left:3426px;top:75px;width:100px;height:118px;overflow:hidden"><div class="a" style="left:0px;top:0px;width:10px;height:3px;background:repeating-linear-gradient(90deg,#d4d4d4 0,#d4d4d4 1.5px,rgba(0,0,0,0) 1.5px,rgba(0,0,0,0) 2px);opacity:0.50"></div><div class="a" style="left:12px;top:0px;width:26px;height:3px;background:repeating-linear-gradient(90deg,#d4d4d4 0,#d4d4d4 1.5px,rgba(0,0,0,0) 1.5px,rgba(0,0,0,0) 2px);opacity:0.50"></div><div class="a" style="left:40px;top:0px;width:36px;height:3px;background:repeating-linear-gradient(90deg,#d4d4d4 0,#d4d4d4 1.5px,rgba(0,0,0,0) 1.5px,rgba(0,0,0,0) 2px);opacity:0.50"></div><div class="a" style="left:0px;top:4px;width:18px;height:3px;background:repeating-linear-gradient(90deg,#d4d4d4 0,#d4d4d4 1.5px,rgba(0,0,0,0) 1.5px,rgba(0,0,0,0) 2px);opacity:0.50"></div><div class="a" style="left:20px;top:4px;width:10px;height:3px;background:repeating-linear-gradient(90deg,#d4d4d4 0,#d4d4d4 1.5px,rgba(0,0,0,0) 1.5px,rgba(0,0,0,0) 2px);opacity:0.50"></div><div class="a" style="left:32px;top:4px;width:12px;height:3px;background:repeating-linear-gradient(90deg,#d4d4d4 0,#d4d4d4 1.5px,rgba(0,0,0,0) 1.5px,rgba(0,0,0,0) 2px);opacity:0.50"></div><div class="a" style="left:46px;top:4px;width:18px;height:3px;background:repeating-linear-gradient(90deg,#d4d4d4 0,#d4d4d4 1.5px,rgba(0,0,0,0) 1.5px,rgba(0,0,0,0) 2px);opacity:0.50"></div><div class="a" style="left:66px;top:4px;width:26px;height:3px;background:repeating-linear-gradient(90deg,#d4d4d4 0,#d4d4d4 1.5px,rgba(0,0,0,0) 1.5px,rgba(0,0,0,0) 2px);opacity:0.50"></div><div class="a" style="left:94px;top:4px;width:10px;height:3px;background:repeating-linear-gradient(90deg,#d4d4d4 0,#d4d4d4 1.5px,rgba(0,0,0,0) 1.5px,rgba(0,0,0,0) 2px);opacity:0.50"></div><div class="a" style="left:106px;top:4px;width:16px;height:3px;background:repeating-linear-gradient(90deg,#d4d4d4 0,#d4d4d4 1.5px,rgba(0,0,0,0) 1.5px,rgba(0,0,0,0) 2px);opacity:0.50"></div><div class="a" style="left:124px;top:4px;width:52px;height:3px;background:repeating-linear-gradient(90deg,#d4d4d4 0,#d4d4d4 1.5px,rgba(0,0,0,0) 1.5px,rgba(0,0,0,0) 2px);opacity:0.50"></div><div class="a" style="left:0px;top:8px;width:12px;height:3px;background:repeating-linear-gradient(90deg,#d4d4d4 0,#d4d4d4 1.5px,rgba(0,0,0,0) 1.5px,rgba(0,0,0,0) 2px);opacity:0.50"></div><div class="a" style="left:14px;top:8px;width:28px;height:3px;background:repeating-linear-gradient(90deg,#d4d4d4 0,#d4d4d4 1.5px,rgba(0,0,0,0) 1.5px,rgba(0,0,0,0) 2px);opacity:0.50"></div><div class="a" style="left:8px;top:12px;width:12px;height:3px;background:repeating-linear-gradient(90deg,#d4d4d4 0,#d4d4d4 1.5px,rgba(0,0,0,0) 1.5px,rgba(0,0,0,0) 2px);opacity:0.50"></div><div class="a" style="left:16px;top:16px;width:32px;height:3px;background:repeating-linear-gradient(90deg,#d4d4d4 0,#d4d4d4 1.5px,rgba(0,0,0,0) 1.5px,rgba(0,0,0,0) 2px);opacity:0.50"></div><div class="a" style="left:24px;top:20px;width:66px;height:3px;background:repeating-linear-gradient(90deg,#d4d4d4 0,#d4d4d4 1.5px,rgba(0,0,0,0) 1.5px,rgba(0,0,0,0) 2px);opacity:0.50"></div><div class="a" style="left:16px;top:24px;width:54px;height:3px;background:repeating-linear-gradient(90deg,#d4d4d4 0,#d4d4d4 1.5px,rgba(0,0,0,0) 1.5px,rgba(0,0,0,0) 2px);opacity:0.50"></div><div class="a" style="left:16px;top:28px;width:14px;height:3px;background:repeating-linear-gradient(90deg,#d4d4d4 0,#d4d4d4 1.5px,rgba(0,0,0,0) 1.5px,rgba(0,0,0,0) 2px);opacity:0.50"></div><div class="a" style="left:24px;top:32px;width:64px;height:3px;background:repeating-linear-gradient(90deg,#d4d4d4 0,#d4d4d4 1.5px,rgba(0,0,0,0) 1.5px,rgba(0,0,0,0) 2px);opacity:0.50"></div><div class="a" style="left:16px;top:36px;width:16px;height:3px;background:repeating-linear-gradient(90deg,#d4d4d4 0,#d4d4d4 1.5px,rgba(0,0,0,0) 1.5px,rgba(0,0,0,0) 2px);opacity:0.50"></div><div class="a" style="left:16px;top:40px;width:58px;height:3px;background:repeating-linear-gradient(90deg,#d4d4d4 0,#d4d4d4 1.5px,rgba(0,0,0,0) 1.5px,rgba(0,0,0,0) 2px);opacity:0.50"></div><div class="a" style="left:16px;top:44px;width:12px;height:3px;background:repeating-linear-gradient(90deg,#d4d4d4 0,#d4d4d4 1.5px,rgba(0,0,0,0) 1.5px,rgba(0,0,0,0) 2px);opacity:0.50"></div><div class="a" style="left:24px;top:48px;width:30px;height:3px;background:repeating-linear-gradient(90deg,#d4d4d4 0,#d4d4d4 1.5px,rgba(0,0,0,0) 1.5px,rgba(0,0,0,0) 2px);opacity:0.50"></div><div class="a" style="left:24px;top:52px;width:16px;height:3px;background:repeating-linear-gradient(90deg,#d4d4d4 0,#d4d4d4 1.5px,rgba(0,0,0,0) 1.5px,rgba(0,0,0,0) 2px);opacity:0.50"></div><div class="a" style="left:16px;top:56px;width:14px;height:3px;background:repeating-linear-gradient(90deg,#d4d4d4 0,#d4d4d4 1.5px,rgba(0,0,0,0) 1.5px,rgba(0,0,0,0) 2px);opacity:0.50"></div><div class="a" style="left:16px;top:60px;width:36px;height:3px;background:repeating-linear-gradient(90deg,#d4d4d4 0,#d4d4d4 1.5px,rgba(0,0,0,0) 1.5px,rgba(0,0,0,0) 2px);opacity:0.50"></div><div class="a" style="left:16px;top:64px;width:12px;height:3px;background:repeating-linear-gradient(90deg,#d4d4d4 0,#d4d4d4 1.5px,rgba(0,0,0,0) 1.5px,rgba(0,0,0,0) 2px);opacity:0.50"></div><div class="a" style="left:24px;top:68px;width:40px;height:3px;background:repeating-linear-gradient(90deg,#d4d4d4 0,#d4d4d4 1.5px,rgba(0,0,0,0) 1.5px,rgba(0,0,0,0) 2px);opacity:0.50"></div><div class="a" style="left:24px;top:72px;width:12px;height:3px;background:repeating-linear-gradient(90deg,#d4d4d4 0,#d4d4d4 1.5px,rgba(0,0,0,0) 1.5px,rgba(0,0,0,0) 2px);opacity:0.50"></div><div class="a" style="left:32px;top:76px;width:52px;height:3px;background:repeating-linear-gradient(90deg,#d4d4d4 0,#d4d4d4 1.5px,rgba(0,0,0,0) 1.5px,rgba(0,0,0,0) 2px);opacity:0.50"></div><div class="a" style="left:32px;top:80px;width:44px;height:3px;background:repeating-linear-gradient(90deg,#d4d4d4 0,#d4d4d4 1.5px,rgba(0,0,0,0) 1.5px,rgba(0,0,0,0) 2px);opacity:0.50"></div><div class="a" style="left:32px;top:84px;width:46px;height:3px;background:repeating-linear-gradient(90deg,#d4d4d4 0,#d4d4d4 1.5px,rgba(0,0,0,0) 1.5px,rgba(0,0,0,0) 2px);opacity:0.50"></div><div class="a" style="left:32px;top:88px;width:52px;height:3px;background:repeating-linear-gradient(90deg,#d4d4d4 0,#d4d4d4 1.5px,rgba(0,0,0,0) 1.5px,rgba(0,0,0,0) 2px);opacity:0.50"></div><div class="a" style="left:24px;top:92px;width:14px;height:3px;background:repeating-linear-gradient(90deg,#d4d4d4 0,#d4d4d4 1.5px,rgba(0,0,0,0) 1.5px,rgba(0,0,0,0) 2px);opacity:0.50"></div><div class="a" style="left:16px;top:96px;width:14px;height:3px;background:repeating-linear-gradient(90deg,#d4d4d4 0,#d4d4d4 1.5px,rgba(0,0,0,0) 1.5px,rgba(0,0,0,0) 2px);opacity:0.50"></div><div class="a" style="left:8px;top:100px;width:14px;height:3px;background:repeating-linear-gradient(90deg,#d4d4d4 0,#d4d4d4 1.5px,rgba(0,0,0,0) 1.5px,rgba(0,0,0,0) 2px);opacity:0.50"></div><div class="a" style="left:0px;top:104px;width:16px;height:3px;background:repeating-linear-gradient(90deg,#d4d4d4 0,#d4d4d4 1.5px,rgba(0,0,0,0) 1.5px,rgba(0,0,0,0) 2px);opacity:0.50"></div></div>
<div class="a" style="left:420px;top:1552px;width:3106px;height:318px;background:#1e1e1e"></div>
<div class="a" style="left:420px;top:1552px;width:3106px;height:2px;background:#414141"></div>
<div class="a ui" style="left:461px;top:1572px;font-size:23.5px;letter-spacing:-0.6px;line-height:36px;transform:scaleX(0.96);transform-origin:0 0;color:#9d9d9d">PROBLEMS</div>
<div class="a ui" style="left:628px;top:1572px;font-size:23.5px;letter-spacing:-0.6px;line-height:36px;transform:scaleX(0.96);transform-origin:0 0;color:#9d9d9d">OUTPUT</div>
<div class="a ui" style="left:768px;top:1572px;font-size:23.5px;letter-spacing:-0.6px;line-height:36px;transform:scaleX(0.96);transform-origin:0 0;color:#e7e7e7">TERMINAL</div>
<div class="a ui" style="left:927px;top:1572px;font-size:23.5px;letter-spacing:-0.6px;line-height:36px;transform:scaleX(0.96);transform-origin:0 0;color:#9d9d9d">GITLENS</div>
<div class="a ui" style="left:1069px;top:1572px;font-size:23.5px;letter-spacing:-0.6px;line-height:36px;transform:scaleX(0.96);transform-origin:0 0;color:#9d9d9d">PORTS</div>
<div class="a ui" style="left:1191px;top:1572px;font-size:23.5px;letter-spacing:-0.6px;line-height:36px;transform:scaleX(0.96);transform-origin:0 0;color:#9d9d9d">DEBUG CONSOLE</div>
<div class="a" style="left:764px;top:1614px;width:119px;height:2px;background:#e7e7e7"></div>
<svg class="a" style="left:3110px;top:1565px" width="416" height="50" fill="none" stroke="#c5c5c5" stroke-width="2.4">
<rect x="16" y="10" width="27" height="27" rx="3"/><path d="M22 17 L29 23 L22 29 M30 31 H37"/>
<path d="M125 10 V36 M112 23 H138"/><path d="M150 20 L158 28 L166 20" stroke-width="2"/>
<rect x="192" y="10" width="25" height="26" rx="3"/><path d="M204.5 10 V36"/>
<path d="M246 14 H268 M252 14 V10 H262 V14 M249 14 L250 36 H264 L265 14 M254 18 V32 M257 18 V32 M260 18 V32" stroke-width="2.2"/>
</svg>
<div class="a ui" style="left:3164px;top:1569px;line-height:44px;color:#cccccc;font-size:23px">zsh</div>
<svg class="a" style="left:3395px;top:1575px" width="131" height="34"><g fill="#c5c5c5"><circle cx="12" cy="14" r="2.6"/><circle cx="23" cy="14" r="2.6"/><circle cx="34" cy="14" r="2.6"/></g><path d="M65 17 L75 7 L85 17" stroke="#c5c5c5" stroke-width="2.4" fill="none"/><path d="M118 3 L132 17 M132 3 L118 17" stroke="#c5c5c5" stroke-width="2.4"/></svg>
<div class="a" style="left:460px;top:1650px;width:552px;height:96px;background:#2472c8"></div>
<div class="a" style="left:1012px;top:1650px;width:216px;height:96px;background:#0dbc79"></div>
<svg class="a" style="left:1012px;top:1650px" width="24" height="48"><path d="M0 0 L20 24 L0 48 Z" fill="#2472c8"/></svg>
<svg class="a" style="left:1012px;top:1698px" width="24" height="48"><path d="M0 0 L20 24 L0 48 Z" fill="#2472c8"/></svg>
<div class="a" style="left:1228px;top:1650px;width:24px;height:96px;background:repeating-conic-gradient(#0dbc79 0 25%,#1a6f50 0 50%) 0 0/3px 3px"></div>
<div class="a" style="left:1252px;top:1650px;width:48px;height:96px;background:repeating-conic-gradient(#127a55 0 25%,#1e1e1e 0 50%) 0 0/3px 3px"></div>
<div class="a mono term" style="left:460px;top:1650px;line-height:48px;color:#f2f2f2"> ~/MyDev/env/<b>os_script</b></div>
<div class="a mono term" style="left:1060px;top:1650px;line-height:48px;color:#000000">master</div>
<div class="a mono term" style="left:460px;top:1698px;line-height:48px;color:#f2f2f2"> ~/MyDev/env/<b>os_script</b></div>
<div class="a mono term" style="left:1060px;top:1698px;line-height:48px;color:#000000">master</div>
<div class="a" style="left:1300px;top:1671px;width:2088px;height:6px;background:repeating-linear-gradient(90deg,rgba(0,0,0,0) 0,rgba(0,0,0,0) 9px,#8f8f8f 9px,#8f8f8f 15px,rgba(0,0,0,0) 15px,rgba(0,0,0,0) 24px)"></div>
<div class="a" style="left:1300px;top:1719px;width:2136px;height:6px;background:repeating-linear-gradient(90deg,rgba(0,0,0,0) 0,rgba(0,0,0,0) 9px,#8f8f8f 9px,#8f8f8f 15px,rgba(0,0,0,0) 15px,rgba(0,0,0,0) 24px)"></div>
<svg class="a" style="left:3436px;top:1721px" width="60" height="60"><path d="M0 1.5 H24 A13 13 0 0 1 37 14.5 V35.5 A13 13 0 0 1 24 48.5 H0" stroke="#8f8f8f" stroke-width="2.4" fill="none"/></svg>
<div class="a mono term" style="left:460px;top:1746px;line-height:48px;color:#5fd700;font-weight:bold">❯</div>
<div class="a" style="left:508px;top:1747px;width:25px;height:47px;border:2px solid #cccccc"></div>
</body></html>
